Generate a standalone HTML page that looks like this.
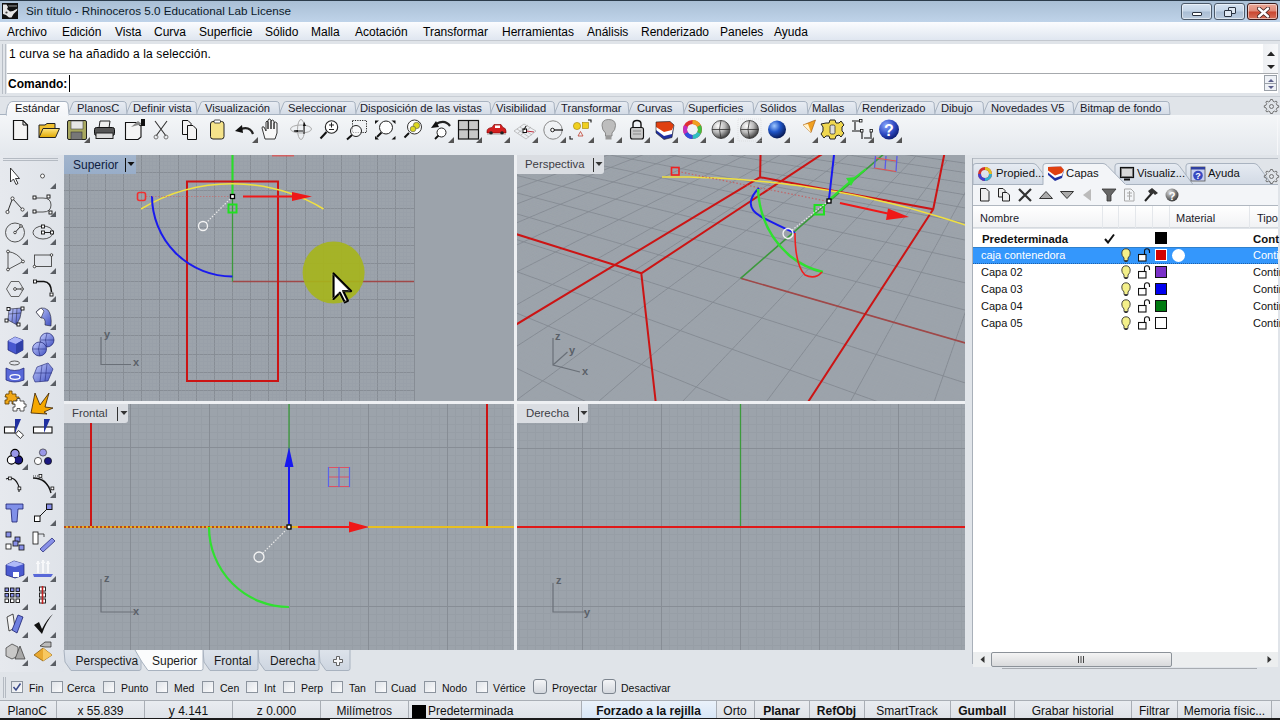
<!DOCTYPE html>
<html><head><meta charset="utf-8">
<style>
*{margin:0;padding:0;box-sizing:border-box}
html,body{width:1280px;height:720px;overflow:hidden;background:#e0e4e9;font-family:"Liberation Sans",sans-serif;font-size:12px;color:#000;position:relative}
.a{position:absolute}
.t{position:absolute;white-space:pre;line-height:1}
#title{left:0;top:0;width:1280px;height:22px;background:linear-gradient(#a9bfd5,#bfd3e9);border-top:1px solid #2b3b4a}
#menu{left:0;top:22px;width:1280px;height:19px;background:linear-gradient(#fbfcfe,#dfe6f0);border-bottom:1px solid #c3c8cf}
#cmd{left:7px;top:44px;width:1271px;height:49px;background:#fff}
.wbtn{width:31px;height:17px;border:1px solid #4c5a6a;border-radius:3px;background:linear-gradient(#d4e2f1 0%,#c3d4e7 48%,#a9bdd4 52%,#bccde0 100%);box-shadow:inset 0 0 0 1px rgba(255,255,255,0.5)}
.wbtn.close{border-color:#3a1a1a;background:linear-gradient(#eaa898 0%,#df8a78 48%,#c9452f 52%,#d6705a 100%)}
.vp{position:absolute;background:#9ca3ab;overflow:hidden}
.vlabel{position:absolute;left:0;top:0;height:19px;background:#e4e8ee;color:#333;font-size:12px}
</style></head><body>

<!-- title bar -->
<div id="title" class="a">
  <svg class="a" style="left:2px;top:1px" width="17" height="17" viewBox="0 0 17 17">
    <rect x="0" y="1" width="16" height="16" fill="#111"/>
    <path d="M6,3.5 H15 V4.5 H7 Z" fill="#9a9a9a"/>
    <path d="M1,2.5 L4.5,2.5 L6,5 L5,7 L8,9.5 L11,9 L15.5,6.5 L15,8.5 L11.5,12 L9.5,15.5 L7,15.5 L4,13 L1,12 Z" fill="#e6e6e6"/>
    <circle cx="4.5" cy="10.5" r="1.1" fill="#444"/>
  </svg>
  <div class="t" style="left:26px;top:4px;font-size:11.7px;color:#0c1a2a">Sin título - Rhinoceros 5.0 Educational Lab License</div>
  <div class="a wbtn" style="left:1181px;top:2px"><div class="a" style="left:10px;top:8px;width:10px;height:4px;background:#fff;border:1px solid #2a3340;border-radius:1px"></div></div>
  <div class="a wbtn" style="left:1214px;top:2px">
    <div class="a" style="left:13px;top:3px;width:8px;height:7px;background:#dfe8f2;border:1px solid #2a3340;border-radius:1px"></div>
    <div class="a" style="left:9px;top:6px;width:8px;height:7px;background:#dfe8f2;border:1px solid #2a3340;border-radius:1px"></div>
  </div>
  <div class="a wbtn close" style="left:1247px;top:2px">
    <svg class="a" style="left:9px;top:3px" width="13" height="11" viewBox="0 0 13 11"><path d="M2 1.5 L11 9.5 M11 1.5 L2 9.5" stroke="#3a2020" stroke-width="4" stroke-linecap="round"/><path d="M2 1.5 L11 9.5 M11 1.5 L2 9.5" stroke="#fff" stroke-width="2.4" stroke-linecap="round"/></svg>
  </div>
</div>

<!-- menu -->
<div id="menu" class="a">
  <div class="t" style="left:7px;top:4px">Archivo</div>
  <div class="t" style="left:62px;top:4px">Edición</div>
  <div class="t" style="left:115px;top:4px">Vista</div>
  <div class="t" style="left:154px;top:4px">Curva</div>
  <div class="t" style="left:199px;top:4px">Superficie</div>
  <div class="t" style="left:265px;top:4px">Sólido</div>
  <div class="t" style="left:311px;top:4px">Malla</div>
  <div class="t" style="left:355px;top:4px">Acotación</div>
  <div class="t" style="left:423px;top:4px">Transformar</div>
  <div class="t" style="left:502px;top:4px">Herramientas</div>
  <div class="t" style="left:587px;top:4px">Análisis</div>
  <div class="t" style="left:641px;top:4px">Renderizado</div>
  <div class="t" style="left:720px;top:4px">Paneles</div>
  <div class="t" style="left:774px;top:4px">Ayuda</div>
</div>

<!-- command area -->
<div class="a" style="left:2px;top:44px;width:1px;height:50px;background:#b8bec6"></div>
<div class="a" style="left:5px;top:44px;width:1px;height:50px;background:#b8bec6"></div>
<div id="cmd" class="a">
  <div class="t" style="left:2px;top:4px;letter-spacing:0.12px">1 curva se ha añadido a la selección.</div>
  <div class="a" style="left:0;top:29px;width:1271px;height:1px;background:#a6a9ad"></div>
  <div class="t" style="left:1px;top:34px;font-weight:bold">Comando:</div>
  <div class="a" style="left:62px;top:31px;width:1px;height:17px;background:#000"></div>
  <div class="a" style="left:1256px;top:0;width:15px;height:29px;background:linear-gradient(90deg,#eef0f3,#f6f7f9)"></div>
  <svg class="a" style="left:1258px;top:4px" width="12" height="22" viewBox="0 0 12 22"><path d="M2 8 L6 3.5 L10 8 Z" fill="#222"/><path d="M2 17 L6 21 L10 17 Z" fill="#222"/></svg>
  <div class="a" style="left:1257px;top:31px;width:13px;height:16px;background:#eef1f6;border:1px solid #9aa0a8"></div>
  <svg class="a" style="left:1258px;top:32px" width="12" height="16" viewBox="0 0 12 16"><path d="M3 6 L6 3 L9 6 Z" fill="#5a5f8a"/><path d="M3 10 L6 13 L9 10 Z" fill="#5a5f8a"/><path d="M0 7.5 H12" stroke="#9aa0a8"/></svg>
</div>
<div class="a" style="left:0;top:96px;width:1280px;height:1px;background:#cdd2d8"></div>

<div class="a" style="left:0;top:115px;width:1280px;height:40px;background:linear-gradient(#f4f6f8,#e4e8ed)"></div>
<svg class="a" style="left:0;top:96px" width="1280" height="24" viewBox="0 96 1280 24">
<defs><linearGradient id="tg" x1="0" y1="0" x2="0" y2="1"><stop offset="0" stop-color="#e9edf3"/><stop offset="1" stop-color="#d3dbe6"/></linearGradient>
<linearGradient id="tga" x1="0" y1="0" x2="0" y2="1"><stop offset="0" stop-color="#fdfdfe"/><stop offset="1" stop-color="#f3f5f8"/></linearGradient></defs>
<path d="M1073,114.5 L1078,102.5 Q1079,101.5 1081,101.5 L1166,101.5 Q1168,101.5 1169,103 L1170,114.5" fill="url(#tg)" stroke="#a7b2c0" stroke-width="1"/>
<path d="M983,114.5 L988,102.5 Q989,101.5 991,101.5 L1070,101.5 Q1072,101.5 1073,103 L1074,114.5" fill="url(#tg)" stroke="#a7b2c0" stroke-width="1"/>
<path d="M934,114.5 L939,102.5 Q940,101.5 942,101.5 L980,101.5 Q982,101.5 983,103 L984,114.5" fill="url(#tg)" stroke="#a7b2c0" stroke-width="1"/>
<path d="M856,114.5 L861,102.5 Q862,101.5 864,101.5 L931,101.5 Q933,101.5 934,103 L935,114.5" fill="url(#tg)" stroke="#a7b2c0" stroke-width="1"/>
<path d="M807,114.5 L812,102.5 Q813,101.5 815,101.5 L853,101.5 Q855,101.5 856,103 L857,114.5" fill="url(#tg)" stroke="#a7b2c0" stroke-width="1"/>
<path d="M753,114.5 L758,102.5 Q759,101.5 761,101.5 L804,101.5 Q806,101.5 807,103 L808,114.5" fill="url(#tg)" stroke="#a7b2c0" stroke-width="1"/>
<path d="M683,114.5 L688,102.5 Q689,101.5 691,101.5 L750,101.5 Q752,101.5 753,103 L754,114.5" fill="url(#tg)" stroke="#a7b2c0" stroke-width="1"/>
<path d="M628,114.5 L633,102.5 Q634,101.5 636,101.5 L680,101.5 Q682,101.5 683,103 L684,114.5" fill="url(#tg)" stroke="#a7b2c0" stroke-width="1"/>
<path d="M554,114.5 L559,102.5 Q560,101.5 562,101.5 L625,101.5 Q627,101.5 628,103 L629,114.5" fill="url(#tg)" stroke="#a7b2c0" stroke-width="1"/>
<path d="M490,114.5 L495,102.5 Q496,101.5 498,101.5 L551,101.5 Q553,101.5 554,103 L555,114.5" fill="url(#tg)" stroke="#a7b2c0" stroke-width="1"/>
<path d="M355,114.5 L360,102.5 Q361,101.5 363,101.5 L487,101.5 Q489,101.5 490,103 L491,114.5" fill="url(#tg)" stroke="#a7b2c0" stroke-width="1"/>
<path d="M279,114.5 L284,102.5 Q285,101.5 287,101.5 L352,101.5 Q354,101.5 355,103 L356,114.5" fill="url(#tg)" stroke="#a7b2c0" stroke-width="1"/>
<path d="M196,114.5 L201,102.5 Q202,101.5 204,101.5 L276,101.5 Q278,101.5 279,103 L280,114.5" fill="url(#tg)" stroke="#a7b2c0" stroke-width="1"/>
<path d="M126,114.5 L131,102.5 Q132,101.5 134,101.5 L193,101.5 Q195,101.5 196,103 L197,114.5" fill="url(#tg)" stroke="#a7b2c0" stroke-width="1"/>
<path d="M68,114.5 L73,102.5 Q74,101.5 76,101.5 L123,101.5 Q125,101.5 126,103 L127,114.5" fill="url(#tg)" stroke="#a7b2c0" stroke-width="1"/>
<path d="M0,114.5 H1170" stroke="#a7b2c0" stroke-width="1"/>
<path d="M6,115 Q7,104 10,102.5 Q11,101.5 13,101.5 L65,101.5 Q67.5,101.5 68,104 L69,115 Z" fill="url(#tga)" stroke="#a7b2c0" stroke-width="1"/>
<rect x="7" y="114" width="61.5" height="2" fill="#f4f6f9"/>
</svg>
<div class="t" style="left:15px;top:103px;font-size:11.2px;color:#111">Estándar</div>
<div class="t" style="left:77px;top:103px;font-size:11.2px;color:#1a1a2a">PlanosC</div>
<div class="t" style="left:133px;top:103px;font-size:11.2px;color:#1a1a2a">Definir vista</div>
<div class="t" style="left:205px;top:103px;font-size:11.2px;color:#1a1a2a">Visualización</div>
<div class="t" style="left:288px;top:103px;font-size:11.2px;color:#1a1a2a">Seleccionar</div>
<div class="t" style="left:360px;top:103px;font-size:11.2px;color:#1a1a2a">Disposición de las vistas</div>
<div class="t" style="left:496px;top:103px;font-size:11.2px;color:#1a1a2a">Visibilidad</div>
<div class="t" style="left:561px;top:103px;font-size:11.2px;color:#1a1a2a">Transformar</div>
<div class="t" style="left:637px;top:103px;font-size:11.2px;color:#1a1a2a">Curvas</div>
<div class="t" style="left:688px;top:103px;font-size:11.2px;color:#1a1a2a">Superficies</div>
<div class="t" style="left:760px;top:103px;font-size:11.2px;color:#1a1a2a">Sólidos</div>
<div class="t" style="left:812px;top:103px;font-size:11.2px;color:#1a1a2a">Mallas</div>
<div class="t" style="left:862px;top:103px;font-size:11.2px;color:#1a1a2a">Renderizado</div>
<div class="t" style="left:941px;top:103px;font-size:11.2px;color:#1a1a2a">Dibujo</div>
<div class="t" style="left:991px;top:103px;font-size:11.2px;color:#1a1a2a">Novedades V5</div>
<div class="t" style="left:1080px;top:103px;font-size:11.2px;color:#1a1a2a">Bitmap de fondo</div>
<svg class="a" style="left:0;top:115px" width="910" height="32" viewBox="0 115 910 32">
<defs>
<radialGradient id="sph" cx="0.35" cy="0.3" r="0.75"><stop offset="0" stop-color="#fff"/><stop offset="0.5" stop-color="#b9b9b9"/><stop offset="1" stop-color="#333"/></radialGradient>
<radialGradient id="bsph" cx="0.35" cy="0.3" r="0.75"><stop offset="0" stop-color="#9fc8ff"/><stop offset="0.45" stop-color="#1f55c8"/><stop offset="1" stop-color="#06154a"/></radialGradient>
<radialGradient id="hsph" cx="0.35" cy="0.3" r="0.75"><stop offset="0" stop-color="#8aa8ff"/><stop offset="0.6" stop-color="#2d48c0"/><stop offset="1" stop-color="#0b1a70"/></radialGradient>
<linearGradient id="fold" x1="0" y1="0" x2="0" y2="1"><stop offset="0" stop-color="#ffe680"/><stop offset="1" stop-color="#e0a800"/></linearGradient>
</defs>
<g fill="#555">
<path d="M90,137 V143 H84 Z"/><path d="M258,137 V143 H252 Z"/><path d="M454,137 V143 H448 Z"/><path d="M482,137 V143 H476 Z"/>
<path d="M510,137 V143 H504 Z"/><path d="M538,137 V143 H532 Z"/><path d="M566,137 V143 H560 Z"/><path d="M594,137 V143 H588 Z"/>
<path d="M622,137 V143 H616 Z"/><path d="M650,137 V143 H644 Z"/><path d="M678,137 V143 H672 Z"/><path d="M706,137 V143 H700 Z"/>
<path d="M734,137 V143 H728 Z"/><path d="M762,137 V143 H756 Z"/><path d="M790,137 V143 H784 Z"/><path d="M818,137 V143 H812 Z"/>
<path d="M846,137 V143 H840 Z"/><path d="M874,137 V143 H868 Z"/><path d="M902,137 V143 H896 Z"/>
</g>
<!-- 1 new -->
<path d="M13.5,120.5 H23 L27.5,125 V139.5 H13.5 Z" fill="#f4f4f4" stroke="#111" stroke-width="1.2"/>
<path d="M23,120.5 V125 H27.5" fill="none" stroke="#111"/>
<!-- 2 open -->
<path d="M39,137.5 V125 H45 L47,123.5 H55 V128" fill="#f0c030" stroke="#222"/>
<path d="M39,137.5 L43,128.5 H59.5 L55.5,137.5 Z" fill="url(#fold)" stroke="#222"/>
<!-- 3 save -->
<rect x="67.5" y="120.5" width="19" height="19" rx="1.5" fill="#a8a860" stroke="#222"/>
<rect x="71" y="121" width="12" height="8" fill="#e6e6e6" stroke="#444" stroke-width="0.6"/>
<rect x="71" y="132" width="11" height="7.5" fill="#777" stroke="#333" stroke-width="0.6"/>
<!-- 4 print -->
<path d="M99,128 L100,121 H110 L109,128" fill="#eee" stroke="#222"/>
<rect x="94.5" y="127.5" width="20" height="8" rx="2" fill="#555" stroke="#111"/>
<rect x="96" y="133" width="17" height="5.5" fill="#ddd" stroke="#222"/>
<!-- 5 import -->
<path d="M125.5,122.5 H136 L141,126 V137 L138,139.5 H125.5 Z" fill="#f4f4f4" stroke="#111" stroke-width="1.1"/>
<path d="M131,127 L138,121 L142,124 Z" fill="#888"/><rect x="141" y="119" width="4" height="7" fill="#111"/>
<!-- 6 scissors -->
<path d="M155,121 L166,136 M167,121 L156,136" stroke="#333" stroke-width="1.1" fill="none"/>
<circle cx="156" cy="137" r="2" fill="none" stroke="#777"/><circle cx="166" cy="137" r="2" fill="none" stroke="#777"/>
<!-- 7 copy -->
<path d="M182.5,120.5 H188 L191,123.5 V134.5 H182.5 Z" fill="#f4f4f4" stroke="#111"/>
<path d="M187.5,125.5 H193 L196.5,129 V139.5 H187.5 Z" fill="#f4f4f4" stroke="#111"/>
<!-- 8 paste -->
<rect x="210.5" y="121.5" width="13.5" height="17.5" rx="2.5" fill="#f5e38a" stroke="#222"/>
<rect x="214" y="120" width="6.5" height="3" rx="1" fill="#fff" stroke="#222" stroke-width="0.8"/>
<!-- 9 undo -->
<path d="M253,134 Q250,126 241,129" fill="none" stroke="#222" stroke-width="2.2"/>
<path d="M235,131 L242,125 L243,133 Z" fill="#111"/>
<!-- 10 hand -->
<path d="M265,139 L262,128 Q262,126 264,127 L266,131 V122 Q267,120 268,122 V129 V120 Q269,118 271,120 V129 V121 Q272,119 274,121 V129 V123 Q275,121 277,123 V133 L275,139 Z" fill="#f8f8f8" stroke="#222" stroke-width="0.9"/>
<!-- 11 rotate -->
<ellipse cx="301" cy="129" rx="10.5" ry="4" fill="none" stroke="#aaa"/>
<ellipse cx="301" cy="129.5" rx="3.5" ry="10" fill="none" stroke="#aaa"/>
<path d="M303,126 L304,121.5 L306,126 Z M298,132 L293,131 L298,130 Z" fill="#111"/>
<path d="M304,125 V134 M294,131 H303" stroke="#111"/>
<!-- 12 zoom +- -->
<circle cx="331.5" cy="127" r="6.2" fill="#fff" stroke="#222" stroke-width="1.1"/>
<path d="M326.5,132 L320.5,138.5" stroke="#111" stroke-width="2"/>
<path d="M329,125 H334 M331.5,122.5 V127.5 M329,129.5 H334" stroke="#222"/>
<!-- 13 zoom window -->
<rect x="352.5" y="120.5" width="14" height="12" fill="none" stroke="#222" stroke-dasharray="1.2 1.2"/>
<circle cx="356" cy="131" r="5.5" fill="#fff" fill-opacity="0.6" stroke="#222"/>
<path d="M352,135 L347,139.5" stroke="#111" stroke-width="2"/>
<!-- 14 zoom extents -->
<circle cx="386" cy="127.5" r="6.5" fill="#fff" stroke="#222"/>
<path d="M381.5,132.5 L377,137" stroke="#111" stroke-width="2"/>
<path d="M375,124 V120.5 H379 Z M395.5,124 V120.5 H391.5 Z M375,136 V139.5 H379 Z M395.5,136 V139.5 H391.5 Z" fill="#111"/>
<!-- 15 zoom selected -->
<circle cx="414.5" cy="127" r="7" fill="#fff" stroke="#333"/>
<circle cx="416.5" cy="125.5" r="3.2" fill="#ddd820" stroke="#555" stroke-width="0.6"/>
<circle cx="413" cy="129" r="2.8" fill="#ddd820" stroke="#555" stroke-width="0.6"/>
<path d="M409,133 L404.5,137.5" stroke="#111" stroke-width="2"/>
<!-- 16 rotate cam -->
<path d="M450,126 Q445,119 436,124" fill="none" stroke="#222" stroke-width="2.2"/>
<path d="M431,128 L436,121 L439,127 Z" fill="#111"/>
<circle cx="441.5" cy="132.5" r="4.5" fill="#fff" stroke="#222"/>
<path d="M438.5,135.5 L435,139" stroke="#111" stroke-width="1.8"/>
<!-- 17 4view -->
<rect x="458.5" y="120.5" width="20" height="18.5" fill="#c8c8c8" stroke="#111" stroke-width="1.2"/>
<path d="M468.5,120.5 V139 M458.5,129.75 H478.5" stroke="#111" stroke-width="1.2"/>
<!-- 18 car -->
<path d="M487,131 Q487,128 492,127.5 L494,124.5 H501 L503,127.5 Q506,128 506,131 V133 H487 Z" fill="#d42020" stroke="#700" stroke-width="0.6"/>
<rect x="495" y="125.5" width="5" height="2.5" fill="#fff"/>
<circle cx="491" cy="133" r="1.8" fill="#222"/><circle cx="502" cy="133" r="1.8" fill="#222"/>
<path d="M487,134.5 H506" stroke="#aaa" stroke-width="0.6"/>
<!-- 19 plane grid -->
<path d="M514,131 L524,124 L536,131 L526,139 Z M517,129 L529,137 M520,127 L532,135 M521,135 L531,127 M518,133 L528,125" fill="none" stroke="#aaa" stroke-width="0.7"/>
<rect x="523" y="129" width="3.5" height="3.5" fill="#fff" stroke="#111"/>
<path d="M526.5,131 L534,132" stroke="#c03040"/><path d="M526,126 L524,130" stroke="#111"/>
<!-- 20 circle -->
<circle cx="553" cy="130" r="9.2" fill="none" stroke="#888" stroke-width="1"/>
<circle cx="552.5" cy="130" r="1.8" fill="#fff" stroke="#222"/>
<path d="M554,130 H563" stroke="#111" stroke-width="1.2"/>
<!-- 21 shapes -->
<circle cx="577" cy="126" r="3.6" fill="#f0d020" stroke="#a08000" stroke-width="0.6"/>
<rect x="582.5" y="122.5" width="6" height="6" fill="#f0d020" stroke="#a08000" stroke-width="0.6"/>
<path d="M578,136 L580.5,131.5 L583,136 Z" fill="none" stroke="#c04030" stroke-width="0.8"/>
<path d="M588,120 H591 V122.5 M570,136 V139 H573" fill="none" stroke="#111" stroke-width="1.1"/>
<!-- 22 bulb -->
<path d="M605.5,136 V133 Q602,130 602,125.5 Q602,119.5 608.6,119.5 Q615.5,119.5 615.5,125.5 Q615.5,130 612,133 V136 Z" fill="#bdbdbd" stroke="#777" stroke-width="0.8"/>
<rect x="605.5" y="136" width="6" height="3.5" fill="#999"/>
<!-- 23 lock -->
<path d="M633,128 V124 Q633,120.5 637,120.5 Q641,120.5 641,124 V128" fill="none" stroke="#111" stroke-width="1.4"/>
<rect x="630.5" y="127.5" width="13" height="11.5" rx="2" fill="#c8c8c8" stroke="#111" stroke-width="1.1"/>
<path d="M633,131 H641 M633,134 H641" stroke="#888"/>
<!-- 24 layers -->
<path d="M656,122 L670,121.5 L674,125 L672,137.5 L664,139.5 L656,133 Z" fill="#2030a0"/>
<path d="M656,122 L670,121.5 L674,125 L672,134 L664,136 L656,130 Z" fill="#fff"/>
<path d="M656,122 L670,121.5 L674,125 L672,130 L664,132 L656,127 Z" fill="#e04010"/>
<path d="M656,122 L670,121.5 L674,125 L672,137.5 L664,139.5 L656,133 Z" fill="none" stroke="#222" stroke-width="0.6"/>
<!-- 25 color wheel -->
<circle cx="692.5" cy="129.5" r="7.5" fill="none" stroke="#e03030" stroke-width="4"/>
<path d="M692.5,122 A7.5,7.5 0 0 1 699,126" fill="none" stroke="#f0a020" stroke-width="4"/>
<path d="M699,126 A7.5,7.5 0 0 1 699,133" fill="none" stroke="#40c040" stroke-width="4"/>
<path d="M699,133 A7.5,7.5 0 0 1 692.5,137" fill="none" stroke="#30c0c0" stroke-width="4"/>
<path d="M692.5,137 A7.5,7.5 0 0 1 686,133" fill="none" stroke="#3050e0" stroke-width="4"/>
<path d="M686,133 A7.5,7.5 0 0 1 686,126" fill="none" stroke="#c030c0" stroke-width="4"/>
<!-- 26 sphere -->
<circle cx="721" cy="129.5" r="9" fill="url(#sph)" stroke="#333" stroke-width="0.8"/>
<path d="M712,129.5 H730 M721,120.5 Q718,129.5 721,138.5" stroke="#333" fill="none" stroke-width="0.8"/>
<!-- 27 grid sphere -->
<rect x="738" y="119" width="23" height="22" fill="none" stroke="#ccc" stroke-width="0.5" stroke-dasharray="1 1"/>
<circle cx="749.5" cy="129.5" r="9" fill="url(#sph)" stroke="#333" stroke-width="0.8"/>
<path d="M740.5,129.5 H758.5 M749.5,120.5 Q746.5,129.5 749.5,138.5" stroke="#333" fill="none" stroke-width="0.8"/>
<!-- 28 blue sphere -->
<circle cx="777" cy="129.5" r="9" fill="url(#bsph)"/>
<!-- 29 orange tri -->
<path d="M803,125 L815.5,120 L811,132.5 Z" fill="#f0a020" stroke="#a05000" stroke-width="0.6"/>
<path d="M803,125 L808,124 L811,132.5 Z" fill="#fff3d0"/>
<!-- 30 gear -->
<path d="M826,123 L829,123 L830,120 H835 L836,123 L839,123 L841,121 L844,125 L842,127 V131 L844,133 L841,137 L839,135 L836,136 L835,139 H830 L829,136 L826,136 L824,138 L821,134 L823,131 V127 L821,124 Z" fill="#f0d850" stroke="#222" stroke-width="1"/>
<rect x="830" y="125" width="5" height="9" rx="1.5" fill="#ddd" stroke="#333" stroke-width="0.8"/>
<!-- 31 dimension -->
<path d="M852,121 H860 M852,131 H860 L862,131 V139 M871,131 V139 M855,122 V130 M864,138 H870" stroke="#111" stroke-width="1.1" fill="none"/>
<rect x="859.5" y="119.5" width="2.5" height="2.5" fill="#fff" stroke="#111" stroke-width="0.8"/>
<rect x="860.5" y="129.5" width="2.5" height="2.5" fill="#fff" stroke="#111" stroke-width="0.8"/>
<rect x="870" y="129.5" width="2.5" height="2.5" fill="#fff" stroke="#111" stroke-width="0.8"/>
<!-- 32 help -->
<circle cx="889" cy="129.5" r="10" fill="url(#hsph)"/>
<text x="889" y="135.5" font-family="Liberation Sans" font-weight="bold" font-size="16" fill="#fff" text-anchor="middle">?</text>
</svg>

<!-- toolbar bg & left toolbar -->
<div class="a" style="left:0;top:96px;width:1280px;height:1px;background:#c9ced5"></div>
<div class="a" style="left:1277px;top:115px;width:1px;height:43px;background:#f6f7f9"></div>
<svg class="a" style="left:1262px;top:98px" width="18" height="16" viewBox="0 0 18 16">
<path d="M9,1.5 L10.5,1.5 L11,3.2 L12.6,3.9 L14.1,3 L15.2,4.1 L14.3,5.6 L15,7.2 L16.7,7.7 V9.3 L15,9.8 L14.3,11.4 L15.2,12.9 L14.1,14 L12.6,13.1 L11,13.8 L10.5,15.5 H8.5 L8,13.8 L6.4,13.1 L4.9,14 L3.8,12.9 L4.7,11.4 L4,9.8 L2.3,9.3 V7.7 L4,7.2 L4.7,5.6 L3.8,4.1 L4.9,3 L6.4,3.9 L8,3.2 L8.5,1.5 Z" fill="none" stroke="#666" stroke-width="0.9"/>
<circle cx="9.5" cy="8.5" r="2" fill="none" stroke="#666" stroke-width="0.9"/>
</svg>
<div class="a" style="left:0;top:155px;width:64px;height:517px;background:linear-gradient(90deg,#e6e9ee,#dfe3e9)"></div>
<div class="a" style="left:3px;top:158px;width:55px;height:1px;background:#b4bac2"></div>
<div class="a" style="left:3px;top:160px;width:55px;height:1px;background:#b4bac2"></div>
<svg class="a" style="left:0;top:160px" width="64" height="512" viewBox="0 160 64 512">
<defs>
<linearGradient id="bl" x1="0" y1="0" x2="1" y2="1"><stop offset="0" stop-color="#c8d0ff"/><stop offset="1" stop-color="#4050c0"/></linearGradient>
</defs>
<g fill="#5a5e64">
<path d="M56,183 V189 H50 Z"/>
<path d="M28,211 V217 H22 Z"/><path d="M56,211 V217 H50 Z"/>
<path d="M28,239 V245 H22 Z"/><path d="M56,239 V245 H50 Z"/>
<path d="M28,268 V274 H22 Z"/><path d="M56,268 V274 H50 Z"/>
<path d="M28,296 V302 H22 Z"/><path d="M56,296 V302 H50 Z"/>
<path d="M28,324 V330 H22 Z"/><path d="M56,324 V330 H50 Z"/>
<path d="M28,352 V358 H22 Z"/><path d="M56,352 V358 H50 Z"/>
<path d="M28,380 V386 H22 Z"/><path d="M56,380 V386 H50 Z"/>
<path d="M28,464 V470 H22 Z"/>
<path d="M56,492 V498 H50 Z"/>
<path d="M56,520 V526 H50 Z"/>
<path d="M28,576 V582 H22 Z"/><path d="M56,576 V582 H50 Z"/>
<path d="M28,604 V610 H22 Z"/><path d="M56,604 V610 H50 Z"/>
<path d="M28,632 V638 H22 Z"/><path d="M56,632 V638 H50 Z"/>
<path d="M28,660 V666 H22 Z"/><path d="M56,660 V666 H50 Z"/>
</g>
<!-- row1 -->
<path d="M10.5,168 V182 L13.5,179 L16,184.5 L18,183.5 L15.5,178.5 H19.5 Z" fill="#fff" stroke="#222" stroke-width="0.9"/>
<circle cx="42.5" cy="176" r="2" fill="#fff" stroke="#333" stroke-width="0.8"/>
<!-- row2 -->
<path d="M7.5,212 L12.5,198.5 L22.5,209.5" fill="none" stroke="#333"/>
<circle cx="7.5" cy="212" r="1.6" fill="#fff" stroke="#222" stroke-width="0.8"/><circle cx="12.5" cy="198.5" r="1.6" fill="#fff" stroke="#222" stroke-width="0.8"/><circle cx="22.5" cy="209.5" r="1.6" fill="#fff" stroke="#222" stroke-width="0.8"/>
<path d="M35,198 H43 Q51,198 51,205 Q51,212 43,212 H35" fill="none" stroke="#444" stroke-width="0.9"/>
<g fill="#fff" stroke="#111" stroke-width="0.9"><rect x="33" y="196" width="3" height="3"/><rect x="47" y="195" width="3" height="3"/><rect x="33" y="210" width="3" height="3"/><rect x="49" y="211" width="3" height="3"/></g>
<!-- row3 -->
<circle cx="15" cy="232.5" r="9.5" fill="none" stroke="#444" stroke-width="0.9"/>
<path d="M15,232.5 L21,226" stroke="#222"/><circle cx="15" cy="232.5" r="1.3" fill="#fff" stroke="#222" stroke-width="0.8"/><circle cx="21" cy="226" r="1.3" fill="#fff" stroke="#222" stroke-width="0.8"/>
<ellipse cx="43" cy="232.5" rx="10" ry="6.5" fill="none" stroke="#444" stroke-width="0.9"/>
<g fill="#fff" stroke="#111" stroke-width="0.9"><rect x="41.5" y="225" width="3" height="3"/><rect x="41.5" y="231" width="3" height="3"/><rect x="50.5" y="231" width="3" height="3"/></g>
<path d="M44.5,232.5 H50.5" stroke="#222"/>
<!-- row4 -->
<path d="M8,251.5 V269.5 L23,261.5 Q18,253 8,251.5" fill="none" stroke="#444" stroke-width="0.9"/>
<g fill="#fff" stroke="#222" stroke-width="0.8"><circle cx="8" cy="251.5" r="1.4"/><circle cx="8" cy="269.5" r="1.4"/><circle cx="23" cy="261.5" r="1.4"/></g>
<rect x="34.5" y="255" width="17" height="11.5" fill="none" stroke="#444" stroke-width="0.9"/>
<g fill="#fff" stroke="#222" stroke-width="0.8"><circle cx="51.5" cy="255" r="1.3"/><circle cx="34.5" cy="266.5" r="1.3"/></g>
<!-- row5 -->
<path d="M11,281.5 H19 L23.5,289 L19,296.5 H11 L6.5,289 Z" fill="none" stroke="#555" stroke-width="0.9"/>
<path d="M15,289 H22" stroke="#333"/><circle cx="15" cy="289" r="1.4" fill="#fff" stroke="#222" stroke-width="0.8"/><circle cx="22" cy="289" r="1.2" fill="#fff" stroke="#222" stroke-width="0.7"/>
<path d="M35,281.5 H44 Q51,282 51.5,292" fill="none" stroke="#111" stroke-width="1.6"/>
<rect x="33.5" y="280" width="3" height="3" fill="#fff" stroke="#111" stroke-width="0.9"/><rect x="50" y="293" width="3" height="3" fill="#fff" stroke="#111" stroke-width="0.9"/>
<!-- row6 -->
<path d="M9,309 L22,308 L20,318 Q18,321 17,325 L8,320 Z" fill="url(#bl)" stroke="#223" stroke-width="0.6"/>
<path d="M9,314 L21,313 M13,309 L12,322 M17,308 L16,324" stroke="#223" stroke-width="0.5"/>
<g fill="#fff" stroke="#111" stroke-width="0.9"><rect x="7" y="307.5" width="3" height="3"/><rect x="21" y="307" width="3" height="3"/><rect x="5" y="319" width="3" height="3"/><rect x="17" y="323" width="3" height="3"/></g>
<path d="M36,312 Q41,305 48,310 Q52,315 51,326 L45,325 Q46,317 41,318 Z" fill="url(#bl)" stroke="#223" stroke-width="0.6"/>
<path d="M36,312 L41,308 L44,311 L41,318 Z" fill="#fff" stroke="#223" stroke-width="0.6"/>
<!-- row7 -->
<path d="M8,341 L15,337 L23,340 V350 L16,354 L8,350 Z" fill="#4858d0" stroke="#1a2070" stroke-width="0.7"/>
<path d="M8,341 L15,337 L23,340 L16,344 Z" fill="#aab4f8"/><path d="M16,344 V354 L23,350 V340 Z" fill="#3040a8"/>
<circle cx="47" cy="340" r="7" fill="url(#bl)" stroke="#1a2070" stroke-width="0.7"/>
<circle cx="39.5" cy="349" r="7" fill="url(#bl)" stroke="#1a2070" stroke-width="0.7"/>
<path d="M33,349 H46 M40,342 Q37,349 40,356 M41,340 H54 M47,333 Q44,340 47,347" stroke="#1a2070" stroke-width="0.5" fill="none"/>
<!-- row8 -->
<ellipse cx="14.5" cy="363" rx="5" ry="2" fill="none" stroke="#333" stroke-width="0.8"/>
<path d="M6,368 Q14.5,373 24,368 V380 Q14.5,384 6,380 Z" fill="#5868d8" stroke="#1a2070" stroke-width="0.7"/>
<ellipse cx="15" cy="377" rx="5" ry="2.3" fill="none" stroke="#fff" stroke-width="1.3"/>
<path d="M37,367 L48,363 L53,369 L48,381 L35,382 L33,377 Z" fill="url(#bl)" stroke="#1a2070" stroke-width="0.6"/>
<path d="M35,373 L52,373 M42,365 L40,382 M47,364 L45,381" stroke="#1a2070" stroke-width="0.5"/>
<!-- row9 puzzle / explode -->
<path d="M6,394 L9,394 L9,391 L12,391 L12,394 L16,394 L16,397 L19,397 L19,400 L16,400 L16,404 L12,404 L12,401 L9,401 L9,404 L5,404 L5,400 L7,400 L7,397 L5,397 Z" fill="#f0a818" stroke="#5a3a00" stroke-width="0.8"/>
<path d="M13,401 L17,401 L17,398.5 L20,398.5 L20,401 L24,401 L24,404 L26,404 L26,407 L24,407 L24,411 L20,411 L20,408.5 L17,408.5 L17,411 L13,411 L13,407 L15,407 L15,404 L13,404 Z" fill="#fff" stroke="#333" stroke-width="0.8"/>
<path d="M31,413 L35,393 L40,405 L49,393 L45,407 L53,408 L44,412 L47,414 Z" fill="#f5a800" stroke="#3a2000" stroke-width="0.8"/>
<!-- row10 trim -->
<rect x="4.5" y="427" width="10.5" height="6" fill="#fff" stroke="#111" stroke-width="1.1"/>
<path d="M15,419 H21 L15,433 Z" fill="#2030a0"/>
<path d="M15.5,434 L18.5,430.5 L23.5,435 L20.5,438.5 Z" fill="#fff" stroke="#222" stroke-width="0.9"/>
<rect x="33.5" y="427" width="18.5" height="6" fill="#fff" stroke="#111" stroke-width="1.1"/>
<path d="M44,419 H50 L44,433 Z" fill="#2030a0"/>
<!-- row11 booleans -->
<g stroke="#000" stroke-width="2.2"><circle cx="15" cy="453.5" r="3.6"/><circle cx="11.5" cy="460" r="3.6"/><circle cx="18.5" cy="460" r="3.6"/></g>
<circle cx="15" cy="453.5" r="3.6" fill="#9a98e8"/><circle cx="11.5" cy="460" r="3.6" fill="#fff"/><circle cx="18.5" cy="460" r="3.6" fill="#1a1880"/>
<circle cx="43" cy="452.5" r="3.6" fill="#9a98e8" stroke="#333" stroke-width="0.7"/><circle cx="38" cy="461" r="3.6" fill="#fff" stroke="#333" stroke-width="0.8"/><circle cx="48" cy="461" r="3.6" fill="#1a1880" stroke="#111" stroke-width="0.7"/>
<!-- row12 curves -->
<path d="M6,479 Q15,475 19,487 V492" fill="none" stroke="#111" stroke-width="1.1"/>
<rect x="8.5" y="477" width="2.8" height="2.8" fill="#fff" stroke="#111" stroke-width="0.8"/><rect x="18" y="487" width="2.8" height="2.8" fill="#fff" stroke="#111" stroke-width="0.8"/>
<path d="M33,478 Q47,478 51,493" fill="none" stroke="#111" stroke-width="1.3"/>
<path d="M33,476 H40 L52,490" fill="none" stroke="#111" stroke-width="0.8" stroke-dasharray="1 1"/>
<rect x="39" y="474.5" width="2.8" height="2.8" fill="#fff" stroke="#111" stroke-width="0.8"/><rect x="51" y="487" width="2.8" height="2.8" fill="#fff" stroke="#111" stroke-width="0.8"/>
<!-- row13 text, scale -->
<path d="M6,504 H23 V509 H18 L17,522 H12 L11,509 H6 Z" fill="#8090e8" stroke="#1a2070" stroke-width="0.8"/>
<rect x="34.5" y="516" width="5.5" height="5.5" fill="#fff" stroke="#111"/>
<rect x="46.5" y="504" width="5.5" height="5.5" fill="#8890e8" stroke="#111"/>
<path d="M40,516 L46,510" stroke="#111"/>
<!-- row14 array -->
<g stroke="#111" stroke-width="0.8"><rect x="6" y="532" width="5" height="5" fill="#8890e8"/><rect x="15" y="537" width="5" height="5" fill="#8890e8"/><rect x="6" y="544" width="5" height="5" fill="#fff"/><rect x="13" y="541" width="5" height="5" fill="#8890e8"/><rect x="19" y="545" width="5" height="5" fill="#8890e8"/></g>
<rect x="33" y="532" width="5" height="12" fill="#fff" stroke="#111" stroke-width="0.8"/>
<path d="M40,549 L52,538 L55,541 L43,552 Z" fill="#8890e8" stroke="#1a2070" stroke-width="0.7"/>
<path d="M38,534 H44 V537" fill="none" stroke="#111" stroke-width="0.7"/>
<!-- row15 -->
<path d="M6,565 L14,561 L24,564 V575 L15,578 L6,575 Z" fill="#4a5ad0" stroke="#1a2070" stroke-width="0.7"/>
<path d="M6,565 L14,561 L24,564 L15,567 Z" fill="#b0baf8"/>
<rect x="13" y="572" width="6" height="5" fill="#fff"/>
<path d="M33,574 H53 L51,577 H34 Z" fill="#5868d8"/>
<path d="M38,573 V563 M43,573 V562 M48,573 V563" stroke="#fff" stroke-width="1.4"/>
<path d="M36.5,564 L38,561 L39.5,564 M41.5,563 L43,560 L44.5,563 M46.5,564 L48,561 L49.5,564" fill="none" stroke="#fff" stroke-width="1"/>
<!-- row16 -->
<g fill="#fff" stroke="#111" stroke-width="0.9">
<rect x="5" y="588" width="3.5" height="3.5" fill="#8890e8"/><rect x="10.5" y="588" width="3.5" height="3.5" fill="#8890e8"/><rect x="16" y="588" width="3.5" height="3.5" fill="#8890e8"/>
<rect x="5" y="593.5" width="3.5" height="3.5" fill="#8890e8"/><rect x="10.5" y="593.5" width="3.5" height="3.5" fill="#8890e8"/><rect x="16" y="593.5" width="3.5" height="3.5" fill="#8890e8"/>
<rect x="5" y="599" width="3.5" height="3.5"/><rect x="10.5" y="599" width="3.5" height="3.5"/><rect x="16" y="599" width="3.5" height="3.5"/>
<rect x="39.5" y="587" width="6" height="4"/><rect x="39.5" y="593" width="6" height="4"/><rect x="39.5" y="599" width="6" height="4"/>
</g>
<path d="M42.5,586 V604" stroke="#c02020" stroke-width="1.6"/>
<!-- row17 -->
<path d="M7,617 L13,614 L15,628 L9,631 Z" fill="#f4f4f4" stroke="#222" stroke-width="0.8"/>
<path d="M12,630 L18,615 L23,617 L17,633 Z" fill="#7080e0" stroke="#1a2070" stroke-width="0.8"/>
<path d="M34,625 L39,622 L42,629 Q47,619 53,614 Q46,622 42,634 Z" fill="#111"/>
<!-- row18 -->
<path d="M6,648 L12,644 L18,647 V656 L12,659 L6,656 Z" fill="#c8c8c8" stroke="#333" stroke-width="0.7"/>
<path d="M15,659 L20,646 L25,659 Z" fill="#a8a8a8" stroke="#333" stroke-width="0.7"/>
<path d="M34,655 L43,648 L52,655 L43,661 Z" fill="#e8a830" stroke="#805000" stroke-width="0.7"/>
<path d="M43,648 L43,661 L52,655 Z" fill="#f8c860"/>
<path d="M40,646 L45,642 H51 V647 H45 Z" fill="#bbb" stroke="#222" stroke-width="0.7"/>
</svg>

<div class="vp" style="left:64px;top:155px;width:450px;height:246px"></div>
<svg class="a" style="left:64px;top:155px" width="450" height="246" viewBox="64 155 450 246">
<path d="M69.2,155V401M87.3,155V401M105.5,155V401M123.6,155V401M64,172.6H414.0M141.8,155V401M64,190.8H414.0M159.9,155V401M64,208.9H414.0M178.1,155V401M64,227.1H414.0M196.2,155V401M64,245.2H414.0M214.3,155V401M64,263.4H414.0M232.5,155V401M64,281.5H414.0M250.7,155V401M64,299.6H414.0M268.8,155V401M64,317.8H414.0M286.9,155V401M64,335.9H414.0M305.1,155V401M64,354.1H414.0M323.2,155V401M64,372.2H414.0M341.4,155V401M64,390.4H414.0M359.5,155V401M377.7,155V401M395.9,155V401M414.0,155V401" stroke="#878d95" stroke-width="1" fill="none" shape-rendering="crispEdges"/>
<path d="M65.5,155V401M72.8,155V401M76.4,155V401M80.0,155V401M83.7,155V401M90.9,155V401M94.6,155V401M98.2,155V401M101.8,155V401M109.1,155V401M64,158.1H414.0M112.7,155V401M64,161.7H414.0M116.3,155V401M64,165.3H414.0M120.0,155V401M64,169.0H414.0M127.2,155V401M64,176.2H414.0M130.9,155V401M64,179.9H414.0M134.5,155V401M64,183.5H414.0M138.1,155V401M64,187.1H414.0M145.4,155V401M64,194.4H414.0M149.0,155V401M64,198.0H414.0M152.6,155V401M64,201.6H414.0M156.3,155V401M64,205.3H414.0M163.5,155V401M64,212.5H414.0M167.2,155V401M64,216.2H414.0M170.8,155V401M64,219.8H414.0M174.4,155V401M64,223.4H414.0M181.7,155V401M64,230.7H414.0M185.3,155V401M64,234.3H414.0M188.9,155V401M64,237.9H414.0M192.6,155V401M64,241.6H414.0M199.8,155V401M64,248.8H414.0M203.5,155V401M64,252.5H414.0M207.1,155V401M64,256.1H414.0M210.7,155V401M64,259.7H414.0M218.0,155V401M64,267.0H414.0M221.6,155V401M64,270.6H414.0M225.2,155V401M64,274.2H414.0M228.9,155V401M64,277.9H414.0M236.1,155V401M64,285.1H414.0M239.8,155V401M64,288.8H414.0M243.4,155V401M64,292.4H414.0M247.0,155V401M64,296.0H414.0M254.3,155V401M64,303.3H414.0M257.9,155V401M64,306.9H414.0M261.5,155V401M64,310.5H414.0M265.2,155V401M64,314.2H414.0M272.4,155V401M64,321.4H414.0M276.1,155V401M64,325.1H414.0M279.7,155V401M64,328.7H414.0M283.3,155V401M64,332.3H414.0M290.6,155V401M64,339.6H414.0M294.2,155V401M64,343.2H414.0M297.8,155V401M64,346.8H414.0M301.5,155V401M64,350.5H414.0M308.7,155V401M64,357.7H414.0M312.4,155V401M64,361.4H414.0M316.0,155V401M64,365.0H414.0M319.6,155V401M64,368.6H414.0M326.9,155V401M64,375.9H414.0M330.5,155V401M64,379.5H414.0M334.1,155V401M64,383.1H414.0M337.8,155V401M64,386.8H414.0M345.0,155V401M64,394.0H414.0M348.7,155V401M64,397.7H414.0M352.3,155V401M355.9,155V401M363.2,155V401M366.8,155V401M370.4,155V401M374.1,155V401M381.3,155V401M385.0,155V401M388.6,155V401M392.2,155V401M399.5,155V401M403.1,155V401M406.7,155V401M410.4,155V401" stroke="#979ea6" stroke-width="1" fill="none" shape-rendering="crispEdges" opacity="0.45"/>
<path d="M232.5,281.5H414.0" stroke="#a04848" stroke-width="1.3"/>
<path d="M232.5,281.5V155" stroke="#3c9a3c" stroke-width="1.3"/>
<path d="M232.5,196V155" stroke="#28e028" stroke-width="2"/>
<rect x="187" y="181.5" width="91" height="199.5" fill="none" stroke="#cc1414" stroke-width="2"/>
<path d="M141,209 A178,178 0 0 1 323.5,209" fill="none" stroke="#f0e040" stroke-width="1.5"/>
<path d="M152,196 A80.5,80.5 0 0 0 232.5,276.5" fill="none" stroke="#1a1aee" stroke-width="2"/>
<path d="M146,196.5 H229" stroke="#c86a6a" stroke-width="1" stroke-dasharray="1.5 1.5" opacity="0.7"/>
<rect x="137.5" y="192.5" width="8" height="8" rx="2" fill="none" stroke="#f03030" stroke-width="1.6"/>
<path d="M243,196.5 H296" stroke="#f01818" stroke-width="2"/><path d="M292,192 L312,196.5 L292,201 Z" fill="#f01818"/>
<rect x="228.5" y="204.5" width="8" height="8" fill="none" stroke="#20e020" stroke-width="2"/>
<rect x="230.5" y="194.5" width="4" height="4" fill="#fff" stroke="#000" stroke-width="1.3"/>
<path d="M230,199 L206,223" stroke="#e8e8e8" stroke-width="1.2" stroke-dasharray="1.5 1.5"/>
<circle cx="203" cy="226" r="4.5" fill="none" stroke="#f4f4f4" stroke-width="1.3"/>
<path d="M272,155.8 H294" stroke="#e05050" stroke-width="1.2"/>
<path d="M101,337 V364.5 H131" fill="none" stroke="#6a7078" stroke-width="1.2"/>
<text x="104" y="338" font-family="Liberation Sans" font-weight="bold" font-size="11" fill="#5a6068">y</text>
<text x="133" y="366" font-family="Liberation Sans" font-weight="bold" font-size="11" fill="#5a6068">x</text>
<circle cx="333.6" cy="272.5" r="31" fill="#a6b41c" opacity="0.92"/>
<path d="M333.5,273.5 V299 L339.9,292.7 L344.7,302.3 L347.9,300.7 L343.1,291.1 L351.1,291.1 Z" fill="#fff" stroke="#000" stroke-width="2.2" stroke-linejoin="round"/><path d="M333.5,273.5 V299 L339.9,292.7 L344.7,302.3 L347.9,300.7 L343.1,291.1 L351.1,291.1 Z" fill="none" stroke="#f4f0c0" stroke-width="0.6" opacity="0.5" transform="translate(-1.5,0)"/>
</svg>
<div class="a" style="left:64px;top:155px;width:72px;height:19px;background:linear-gradient(#a2b5cd,#98adc9)"></div>
<div class="t" style="left:73px;top:159px;font-size:12px;color:#102040">Superior</div>
<div class="a" style="left:125px;top:158px;width:1px;height:14px;background:#111"></div>
<svg class="a" style="left:126px;top:160px" width="10" height="8"><path d="M1.5,2 H8.5 L5,6 Z" fill="#111"/></svg>
<div class="vp" style="left:64px;top:404px;width:450px;height:246px"></div>
<svg class="a" style="left:64px;top:404px" width="450" height="246" viewBox="64 404 450 246">
<path d="M67.2,404V650M75.2,404V650M83.1,404V650M91.0,404V650M98.9,404V650M106.8,404V650M114.8,404V650M122.7,404V650M138.5,404V650M146.4,404V650M154.4,404V650M162.3,404V650M170.2,404V650M64,408.2H514M178.1,404V650M64,416.1H514M186.0,404V650M64,424.0H514M194.0,404V650M64,432.0H514M201.9,404V650M64,439.9H514M217.7,404V650M64,455.7H514M225.6,404V650M64,463.6H514M233.6,404V650M64,471.6H514M241.5,404V650M64,479.5H514M249.4,404V650M64,487.4H514M257.3,404V650M64,495.3H514M265.2,404V650M64,503.2H514M273.2,404V650M64,511.2H514M281.1,404V650M64,519.1H514M296.9,404V650M64,534.9H514M304.8,404V650M64,542.8H514M312.8,404V650M64,550.8H514M320.7,404V650M64,558.7H514M328.6,404V650M64,566.6H514M336.5,404V650M64,574.5H514M344.4,404V650M64,582.4H514M352.4,404V650M64,590.4H514M360.3,404V650M64,598.3H514M376.1,404V650M64,614.1H514M384.0,404V650M64,622.0H514M392.0,404V650M64,630.0H514M399.9,404V650M64,637.9H514M407.8,404V650M64,645.8H514M415.7,404V650M423.6,404V650M431.6,404V650M439.5,404V650M455.3,404V650M463.2,404V650M471.2,404V650M479.1,404V650M487.0,404V650M494.9,404V650M502.8,404V650M510.8,404V650" stroke="#979ea6" stroke-width="1" fill="none" shape-rendering="crispEdges"/>
<path d="M130.6,404V650M209.8,404V650M64,447.8H514M289.0,404V650M64,527.0H514M368.2,404V650M64,606.2H514M447.4,404V650" stroke="#878d95" stroke-width="1" fill="none" shape-rendering="crispEdges"/>
<path d="M289,527V404" stroke="#3c9a3c" stroke-width="1.3"/>
<path d="M91,404 V527 M487,404 V527" stroke="#cc1414" stroke-width="2"/>
<path d="M64,527 H298" stroke="#e8b020" stroke-width="2"/>
<path d="M64,527 H289" stroke="#b84818" stroke-width="2" stroke-dasharray="2 2"/>
<path d="M368,527 H514" stroke="#e8c020" stroke-width="2"/>
<path d="M298,527 H352" stroke="#f01818" stroke-width="2"/><path d="M349,521.5 L369,527 L349,532.5 Z" fill="#f01818"/>
<path d="M289,524 V465" stroke="#1818f0" stroke-width="2"/><path d="M284.5,467 L289,447 L293.5,467 Z" fill="#1818f0"/>
<path d="M209,527 A80,80 0 0 0 289,607" fill="none" stroke="#30e030" stroke-width="2.2"/>
<path d="M287,529 L262,554" stroke="#e8e8e8" stroke-width="1.2" stroke-dasharray="1.5 1.5"/>
<circle cx="259" cy="557" r="5" fill="none" stroke="#f4f4f4" stroke-width="1.3"/>
<rect x="287" y="525" width="4" height="4" fill="#fff" stroke="#000" stroke-width="1.3"/>
<path d="M328.5,467.5 H349.5 M328.5,477 H349.5 M328.5,486.5 H349.5" stroke="#e05060" stroke-width="1.2"/><path d="M328.5,467 V487 M339,467 V487 M349.5,467 V487" stroke="#5a64e8" stroke-width="1.2"/>
<path d="M101,579 V612 H135" fill="none" stroke="#6a7078" stroke-width="1.2"/>
<text x="104" y="582" font-family="Liberation Sans" font-weight="bold" font-size="11" fill="#5a6068">z</text>
<text x="133" y="615" font-family="Liberation Sans" font-weight="bold" font-size="11" fill="#5a6068">x</text>
</svg>
<div class="a" style="left:64px;top:404px;width:64px;height:19px;background:#dadde2;border-radius:0 0 3px 0"></div>
<div class="t" style="left:72px;top:408px;font-size:11.4px;color:#3c3c44">Frontal</div>
<div class="a" style="left:117px;top:407px;width:1px;height:14px;background:#333"></div>
<svg class="a" style="left:119px;top:409px" width="10" height="8"><path d="M1.5,2 H8.5 L5,6 Z" fill="#333"/></svg>
<div class="vp" style="left:517px;top:404px;width:448px;height:246px"></div>
<svg class="a" style="left:517px;top:404px" width="448" height="246" viewBox="517 404 448 246">
<path d="M519.3,404V650M527.2,404V650M535.1,404V650M543.0,404V650M550.9,404V650M558.8,404V650M566.7,404V650M574.6,404V650M590.4,404V650M598.3,404V650M606.2,404V650M614.1,404V650M622.0,404V650M517,408.5H965M629.9,404V650M517,416.4H965M637.8,404V650M517,424.3H965M645.7,404V650M517,432.2H965M653.6,404V650M517,440.1H965M669.4,404V650M517,455.9H965M677.3,404V650M517,463.8H965M685.2,404V650M517,471.7H965M693.1,404V650M517,479.6H965M701.0,404V650M517,487.5H965M708.9,404V650M517,495.4H965M716.8,404V650M517,503.3H965M724.7,404V650M517,511.2H965M732.6,404V650M517,519.1H965M748.4,404V650M517,534.9H965M756.3,404V650M517,542.8H965M764.2,404V650M517,550.7H965M772.1,404V650M517,558.6H965M780.0,404V650M517,566.5H965M787.9,404V650M517,574.4H965M795.8,404V650M517,582.3H965M803.7,404V650M517,590.2H965M811.6,404V650M517,598.1H965M827.4,404V650M517,613.9H965M835.3,404V650M517,621.8H965M843.2,404V650M517,629.7H965M851.1,404V650M517,637.6H965M859.0,404V650M517,645.5H965M866.9,404V650M874.8,404V650M882.7,404V650M890.6,404V650M906.4,404V650M914.3,404V650M922.2,404V650M930.1,404V650M938.0,404V650M945.9,404V650M953.8,404V650M961.7,404V650" stroke="#979ea6" stroke-width="1" fill="none" shape-rendering="crispEdges"/>
<path d="M582.5,404V650M661.5,404V650M517,448.0H965M740.5,404V650M517,527.0H965M819.5,404V650M517,606.0H965M898.5,404V650" stroke="#878d95" stroke-width="1" fill="none" shape-rendering="crispEdges"/>
<path d="M740.5,527V404" stroke="#3c9a3c" stroke-width="1.3"/>
<path d="M517,527 H965" stroke="#e01818" stroke-width="2"/>
<path d="M554,578 V580 M554,579 V579" stroke="none"/>
<path d="M553,583 V612 H585" fill="none" stroke="#6a7078" stroke-width="1.2"/>
<text x="556" y="584" font-family="Liberation Sans" font-weight="bold" font-size="11" fill="#5a6068">z</text>
<text x="584" y="616" font-family="Liberation Sans" font-weight="bold" font-size="11" fill="#5a6068">y</text>
</svg>
<div class="a" style="left:517px;top:404px;width:71px;height:19px;background:#dadde2;border-radius:0 0 3px 0"></div>
<div class="t" style="left:526px;top:408px;font-size:11.4px;color:#3c3c44">Derecha</div>
<div class="a" style="left:578px;top:407px;width:1px;height:14px;background:#333"></div>
<svg class="a" style="left:579px;top:409px" width="10" height="8"><path d="M1.5,2 H8.5 L5,6 Z" fill="#333"/></svg>
<div class="vp" style="left:517px;top:155px;width:448px;height:246px"></div>
<svg class="a" style="left:517px;top:155px" width="448" height="246" viewBox="517 155 448 246">
<path d="M-290.3,417.2L654.7,118.7M-290.3,417.2L-492.2,9714.1M-290.9,446.8L673.6,121.4M-153.1,373.8L2912.6,9714.1M-291.7,480.7L693.3,124.2M-40.9,338.4L6317.5,9714.1M-292.5,520.0L713.9,127.1M52.5,308.9L8055.4,8092.7M-293.5,566.1L735.3,130.2M131.6,283.9L3339.4,2611.6M-294.7,620.9L757.7,133.4M199.4,262.5L2427.7,1552.0M-296.1,687.0L781.1,136.8M258.1,243.9L2040.1,1101.5M-297.9,768.5L805.6,140.3M309.4,227.7L1825.6,852.1M-300.1,871.5L831.2,144.0M354.8,213.4L1689.3,693.8M-303.1,1005.5L858.1,147.8M395.0,200.7L1595.2,584.3M-307.0,1187.2L886.3,151.8M431.1,189.3L1526.2,504.2M-312.7,1447.7L915.9,156.1M463.5,179.0L1473.4,442.9M-321.4,1852.1L947.1,160.6M492.8,169.8L1431.8,394.5M-336.9,2565.5L980.0,165.3M519.5,161.3L1398.2,355.4M-371.6,4160.9L1014.6,170.2M543.9,153.7L1370.4,323.1M-342.1,9714.1L1051.2,175.5M566.2,146.6L1347.0,296.0M1616.4,9714.1L1089.9,181.0M586.7,140.1L1327.2,272.9M3574.9,9714.1L1131.0,186.9M605.7,134.1L1310.0,253.0M5533.5,9714.1L1174.6,193.2M623.2,128.6L1295.1,235.6M7492.0,9714.1L1221.0,199.8M639.5,123.4L1282.0,220.4M9450.5,9714.1L1270.4,206.9M654.7,118.7L1270.4,206.9" stroke="#868c94" stroke-width="1" fill="none"/>
<path d="M-290.3,419.9L656.5,118.9M-275.2,412.4L-151.8,9714.1M-290.4,422.8L658.4,119.2M-260.5,407.7L188.7,9714.1M-290.5,425.6L660.3,119.5M-246.0,403.2L529.2,9714.1M-290.5,428.5L662.1,119.7M-231.9,398.7L869.7,9714.1M-290.6,431.5L664.0,120.0M-218.1,394.4L1210.2,9714.1M-290.7,434.4L665.9,120.3M-204.5,390.1L1550.7,9714.1M-290.7,437.5L667.8,120.5M-191.3,385.9L1891.2,9714.1M-290.8,440.5L669.8,120.8M-178.3,381.8L2231.7,9714.1M-290.9,443.6L671.7,121.1M-165.6,377.8L2572.2,9714.1M-291.0,449.9L675.5,121.6M-140.9,370.0L3253.1,9714.1M-291.1,453.2L677.5,121.9M-128.9,366.2L3593.6,9714.1M-291.1,456.4L679.4,122.2M-117.2,362.5L3934.1,9714.1M-291.2,459.8L681.4,122.5M-105.6,358.8L4274.6,9714.1M-291.3,463.1L683.4,122.8M-94.3,355.3L4615.1,9714.1M-291.3,466.5L685.3,123.0M-83.3,351.8L4955.6,9714.1M-291.4,470.0L687.3,123.3M-72.4,348.3L5296.1,9714.1M-291.5,473.5L689.3,123.6M-61.7,345.0L5636.6,9714.1M-291.6,477.1L691.3,123.9M-51.2,341.6L5977.0,9714.1M-291.7,484.4L695.3,124.5M-30.8,335.2L6658.0,9714.1M-291.8,488.1L697.4,124.8M-20.9,332.1L6998.5,9714.1M-291.9,491.9L699.4,125.1M-11.1,329.0L7339.0,9714.1M-292.0,495.7L701.5,125.4M-1.6,326.0L7679.5,9714.1M-292.1,499.6L703.5,125.7M7.8,323.0L8020.0,9714.1M-292.2,503.6L705.6,125.9M17.1,320.1L8360.5,9714.1M-292.2,507.6L707.6,126.2M26.2,317.2L8701.0,9714.1M-292.3,511.7L709.7,126.5M35.1,314.4L9041.4,9714.1M-292.4,515.8L711.8,126.8M43.9,311.6L9381.9,9714.1M-292.6,524.3L716.0,127.4M61.0,306.2L6851.1,6693.0M-292.7,528.6L718.1,127.7M69.4,303.5L6001.4,5705.4M-292.8,533.1L720.2,128.0M77.6,300.9L5369.8,4971.3M-292.9,537.5L722.4,128.4M85.7,298.4L4881.8,4404.2M-293.0,542.1L724.5,128.7M93.7,295.9L4493.5,3952.9M-293.1,546.7L726.6,129.0M101.5,293.4L4177.1,3585.2M-293.2,551.5L728.8,129.3M109.2,291.0L3914.4,3279.9M-293.3,556.3L731.0,129.6M116.8,288.6L3692.8,3022.3M-293.4,561.1L733.1,129.9M124.3,286.2L3503.3,2802.1M-293.6,571.2L737.5,130.5M138.9,281.6L3196.3,2445.3M-293.7,576.3L739.7,130.8M146.0,279.3L3070.2,2298.7M-293.8,581.5L741.9,131.2M153.0,277.1L2958.3,2168.7M-294.0,586.8L744.2,131.5M159.9,274.9L2858.3,2052.4M-294.1,592.3L746.4,131.8M166.7,272.8L2768.4,1948.0M-294.2,597.8L748.6,132.1M173.5,270.7L2687.2,1853.5M-294.3,603.4L750.9,132.4M180.1,268.6L2613.4,1767.8M-294.4,609.1L753.2,132.8M186.6,266.5L2546.1,1689.5M-294.6,614.9L755.4,133.1M193.0,264.5L2484.4,1617.9M-294.8,626.9L760.0,133.8M205.6,260.5L2375.5,1491.2M-295.0,633.1L762.3,134.1M211.8,258.6L2327.1,1435.0M-295.1,639.4L764.6,134.4M217.8,256.6L2282.2,1382.8M-295.2,645.8L767.0,134.7M223.8,254.8L2240.4,1334.3M-295.4,652.3L769.3,135.1M229.7,252.9L2201.4,1289.0M-295.5,659.0L771.6,135.4M235.6,251.0L2165.0,1246.6M-295.7,665.8L774.0,135.8M241.3,249.2L2130.8,1206.9M-295.8,672.7L776.4,136.1M247.0,247.4L2098.7,1169.6M-296.0,679.8L778.7,136.4M252.6,245.7L2068.6,1134.6M-296.3,694.4L783.5,137.1M263.5,242.2L2013.3,1070.3M-296.5,702.0L785.9,137.5M268.9,240.5L1987.9,1040.8M-296.6,709.7L788.3,137.8M274.2,238.8L1963.8,1012.8M-296.8,717.5L790.8,138.2M279.4,237.2L1941.0,986.3M-297.0,725.6L793.2,138.5M284.6,235.6L1919.4,961.2M-297.2,733.8L795.7,138.9M289.7,233.9L1898.8,937.2M-297.3,742.2L798.1,139.2M294.7,232.4L1879.2,914.4M-297.5,750.8L800.6,139.6M299.7,230.8L1860.5,892.7M-297.7,759.6L803.1,139.9M304.6,229.2L1842.6,872.0M-298.1,777.8L808.1,140.6M314.2,226.2L1809.3,833.2M-298.3,787.2L810.6,141.0M319.0,224.7L1793.7,815.1M-298.5,796.8L813.2,141.4M323.6,223.2L1778.7,797.7M-298.7,806.7L815.7,141.7M328.2,221.8L1764.4,781.0M-299.0,816.8L818.3,142.1M332.8,220.3L1750.6,765.0M-299.2,827.2L820.8,142.5M337.3,218.9L1737.4,749.7M-299.4,837.9L823.4,142.8M341.7,217.5L1724.7,734.9M-299.7,848.8L826.0,143.2M346.1,216.1L1712.5,720.7M-299.9,860.0L828.6,143.6M350.5,214.7L1700.7,707.0M-300.4,883.3L833.9,144.3M359.0,212.1L1678.4,681.1M-300.7,895.4L836.5,144.7M363.2,210.7L1667.8,668.8M-300.9,907.8L839.2,145.1M367.3,209.4L1657.7,657.0M-301.2,920.6L841.8,145.5M371.4,208.1L1647.8,645.6M-301.5,933.8L844.5,145.9M375.5,206.8L1638.3,634.5M-301.8,947.3L847.2,146.2M379.5,205.6L1629.1,623.8M-302.1,961.2L849.9,146.6M383.4,204.3L1620.2,613.5M-302.4,975.5L852.6,147.0M387.4,203.1L1611.6,603.5M-302.7,990.3L855.4,147.4M391.2,201.9L1603.2,593.7M-303.4,1021.1L860.9,148.2M398.8,199.5L1587.3,575.2M-303.7,1037.3L863.6,148.6M402.6,198.3L1579.7,566.4M-304.1,1054.0L866.4,149.0M406.3,197.1L1572.3,557.8M-304.5,1071.2L869.2,149.4M409.9,196.0L1565.1,549.5M-304.9,1088.9L872.0,149.8M413.5,194.8L1558.2,541.4M-305.3,1107.3L874.9,150.2M417.1,193.7L1551.4,533.5M-305.7,1126.2L877.7,150.6M420.7,192.6L1544.8,525.9M-306.1,1145.9L880.5,151.0M424.2,191.5L1538.4,518.4M-306.5,1166.2L883.4,151.4M427.6,190.4L1532.2,511.2M-307.5,1209.0L889.2,152.3M434.5,188.2L1520.3,497.3M-308.0,1231.6L892.1,152.7M437.8,187.1L1514.5,490.6M-308.5,1255.1L895.0,153.1M441.2,186.1L1508.9,484.1M-309.0,1279.4L898.0,153.5M444.5,185.1L1503.5,477.8M-309.6,1304.7L900.9,153.9M447.7,184.0L1498.1,471.6M-310.1,1331.0L903.9,154.4M450.9,183.0L1493.0,465.6M-310.7,1358.4L906.9,154.8M454.1,182.0L1487.9,459.7M-311.3,1386.9L909.9,155.2M457.3,181.0L1483.0,454.0M-312.0,1416.6L912.9,155.7M460.4,180.0L1478.1,448.3M-313.4,1480.0L919.0,156.5M466.6,178.1L1468.8,437.5M-314.1,1513.9L922.0,157.0M469.6,177.1L1464.3,432.3M-314.9,1549.3L925.1,157.4M472.6,176.2L1460.0,427.2M-315.7,1586.4L928.2,157.9M475.6,175.2L1455.7,422.2M-316.5,1625.3L931.3,158.3M478.5,174.3L1451.5,417.4M-317.4,1666.1L934.4,158.7M481.5,173.4L1447.4,412.6M-318.3,1709.1L937.6,159.2M484.3,172.5L1443.4,407.9M-319.3,1754.2L940.7,159.7M487.2,171.6L1439.4,403.4M-320.4,1801.8L943.9,160.1M490.0,170.7L1435.6,398.9M-322.6,1905.2L950.3,161.0M495.6,168.9L1428.2,390.3M-323.8,1961.4L953.5,161.5M498.4,168.0L1424.5,386.1M-325.1,2020.9L956.8,162.0M501.1,167.2L1421.0,382.0M-326.5,2084.2L960.0,162.4M503.8,166.3L1417.6,377.9M-328.0,2151.6L963.3,162.9M506.5,165.5L1414.2,374.0M-329.5,2223.4L966.6,163.4M509.1,164.6L1410.8,370.1M-331.2,2300.1L969.9,163.8M511.8,163.8L1407.6,366.3M-333.0,2382.3L973.2,164.3M514.4,163.0L1404.4,362.6M-334.9,2470.5L976.6,164.8M517.0,162.2L1401.2,359.0M-339.2,2668.0L983.3,165.8M522.0,160.5L1395.2,351.9M-341.6,2779.0L986.7,166.2M524.6,159.8L1392.2,348.5M-344.2,2899.5L990.2,166.7M527.0,159.0L1389.3,345.1M-347.1,3031.0L993.6,167.2M529.5,158.2L1386.4,341.8M-350.2,3174.8L997.0,167.7M532.0,157.4L1383.6,338.5M-353.6,3333.0L1000.5,168.2M534.4,156.6L1380.9,335.3M-357.4,3507.6L1004.0,168.7M536.8,155.9L1378.2,332.2M-361.6,3701.4L1007.5,169.2M539.2,155.1L1375.5,329.1M-366.3,3917.8L1011.1,169.7M541.5,154.4L1372.9,326.1M-377.6,4436.1L1018.2,170.7M546.2,152.9L1367.9,320.2M-384.4,4750.0L1021.8,171.3M548.5,152.2L1365.4,317.3M-392.3,5111.7L1025.4,171.8M550.8,151.5L1363.0,314.5M-401.4,5532.7L1029.0,172.3M553.0,150.8L1360.6,311.7M-412.2,6029.1L1032.7,172.8M555.3,150.1L1358.2,309.0M-425.1,6623.1L1036.3,173.4M557.5,149.4L1355.9,306.3M-440.8,7346.4L1040.0,173.9M559.7,148.7L1353.6,303.6M-460.4,8246.7L1043.7,174.4M561.9,148.0L1351.4,301.0M-485.4,9397.9L1047.5,174.9M564.0,147.3L1349.2,298.5M-146.2,9714.1L1055.0,176.0M568.3,145.9L1344.9,293.5M49.6,9714.1L1058.8,176.6M570.4,145.3L1342.8,291.1M245.5,9714.1L1062.6,177.1M572.5,144.6L1340.7,288.7M441.3,9714.1L1066.4,177.7M574.6,143.9L1338.7,286.3M637.2,9714.1L1070.3,178.2M576.7,143.3L1336.7,284.0M833.0,9714.1L1074.2,178.8M578.7,142.6L1334.7,281.7M1028.9,9714.1L1078.1,179.3M580.7,142.0L1332.8,279.4M1224.7,9714.1L1082.0,179.9M582.7,141.4L1330.9,277.2M1420.6,9714.1L1086.0,180.5M584.7,140.7L1329.0,275.0M1812.3,9714.1L1093.9,181.6M588.7,139.5L1325.3,270.8M2008.1,9714.1L1098.0,182.2M590.6,138.9L1323.5,268.7M2204.0,9714.1L1102.0,182.8M592.5,138.3L1321.8,266.6M2399.8,9714.1L1106.1,183.3M594.5,137.7L1320.0,264.6M2595.7,9714.1L1110.2,183.9M596.4,137.1L1318.3,262.6M2791.5,9714.1L1114.3,184.5M598.3,136.5L1316.6,260.6M2987.4,9714.1L1118.4,185.1M600.1,135.9L1314.9,258.6M3183.2,9714.1L1122.6,185.7M602.0,135.3L1313.3,256.7M3379.1,9714.1L1126.8,186.3M603.8,134.7L1311.6,254.8M3770.8,9714.1L1135.2,187.5M607.5,133.6L1308.4,251.1M3966.6,9714.1L1139.5,188.1M609.3,133.0L1306.9,249.3M4162.5,9714.1L1143.8,188.8M611.1,132.4L1305.3,247.5M4358.3,9714.1L1148.1,189.4M612.8,131.9L1303.8,245.7M4554.2,9714.1L1152.5,190.0M614.6,131.3L1302.3,244.0M4750.0,9714.1L1156.8,190.6M616.3,130.8L1300.8,242.3M4945.9,9714.1L1161.2,191.3M618.1,130.2L1299.4,240.6M5141.8,9714.1L1165.7,191.9M619.8,129.7L1297.9,238.9M5337.6,9714.1L1170.1,192.5M621.5,129.1L1296.5,237.3M5729.3,9714.1L1179.1,193.8M624.9,128.1L1293.7,234.0M5925.2,9714.1L1183.6,194.5M626.6,127.5L1292.4,232.4M6121.0,9714.1L1188.2,195.1M628.2,127.0L1291.0,230.9M6316.9,9714.1L1192.8,195.8M629.9,126.5L1289.7,229.3M6512.7,9714.1L1197.4,196.4M631.5,126.0L1288.4,227.8M6708.6,9714.1L1202.1,197.1M633.1,125.5L1287.0,226.3M6904.4,9714.1L1206.8,197.8M634.7,124.9L1285.8,224.8M7100.3,9714.1L1211.5,198.5M636.3,124.4L1284.5,223.3M7296.1,9714.1L1216.2,199.1M637.9,123.9L1283.2,221.8M7687.8,9714.1L1225.8,200.5M641.1,122.9L1280.8,219.0M7883.7,9714.1L1230.6,201.2M642.6,122.5L1279.6,217.6M8079.5,9714.1L1235.5,201.9M644.2,122.0L1278.4,216.2M8275.4,9714.1L1240.4,202.6M645.7,121.5L1277.2,214.8M8471.2,9714.1L1245.3,203.3M647.2,121.0L1276.0,213.4M8667.1,9714.1L1250.2,204.0M648.7,120.5L1274.9,212.1M8862.9,9714.1L1255.2,204.7M650.2,120.1L1273.7,210.8M9058.8,9714.1L1260.2,205.4M651.7,119.6L1272.6,209.5M9254.6,9714.1L1265.3,206.2M653.2,119.1L1271.5,208.2" stroke="#a0a6ae" stroke-width="0.5" fill="none" opacity="0.35"/>
<path d="M740.6,278.3L1526.2,504.2" stroke="#a04848" stroke-width="1.6"/>
<path d="M740.6,278.3L886.3,151.8" stroke="#3c9a3c" stroke-width="1.6"/>
<path d="M377.3,408.4L678.1,602.1M253.6,151.9L641.3,273.3M377.3,408.4L253.6,151.9M678.1,602.1L933.2,209.3M641.3,273.3L963.1,61.1M678.1,602.1L641.3,273.3M933.2,209.3L760.1,177.2M963.1,61.1L762.6,48.8M933.2,209.3L963.1,61.1M760.1,177.2L377.3,408.4M762.6,48.8L253.6,151.9M760.1,177.2L762.6,48.8" stroke="#cc1414" stroke-width="2" fill="none"/>
<polyline points="662.0,176.9 671.2,176.9 680.3,177.0 689.3,177.1 698.4,177.4 707.4,177.7 716.5,178.1 725.5,178.6 734.5,179.1 743.5,179.8 752.5,180.5 761.6,181.4 770.6,182.3 779.7,183.3 788.8,184.4 798.0,185.6 807.1,187.0 816.4,188.4 825.6,189.9 834.9,191.5 844.3,193.3 853.7,195.1 863.2,197.1 872.8,199.2 882.5,201.4 892.2,203.7 902.0,206.2 912.0,208.9 922.0,211.7 932.2,214.6 942.5,217.7 952.9,221.0 963.4,224.4 974.1,228.1 985.0,231.9 996.0,236.0 1007.3,240.2 1018.7,244.7 1030.3,249.5 1042.1,254.5" fill="none" stroke="#f0e040" stroke-width="1.5"/>
<path d="M678,171.5 L826,201" stroke="#d05050" stroke-width="1.2" stroke-dasharray="1.5 2" opacity="0.75"/>
<rect x="671.5" y="167.5" width="7.5" height="7.5" fill="none" stroke="#f02020" stroke-width="1.6"/>
<path d="M829,199 L834,155" stroke="#1818f0" stroke-width="2"/>
<path d="M759,188 Q742,205 760,216 Q775,224 795,233" fill="none" stroke="#1a1aee" stroke-width="2"/>
<path d="M758,189 Q760,230 790,256 Q805,268 823,272" fill="none" stroke="#30e030" stroke-width="2.4"/>
<path d="M795,233 Q795,265 805,275 Q815,280 822,272" fill="none" stroke="#f02020" stroke-width="1.6"/>
<path d="M830,199 L851,181 M851,181 L866,169" stroke="#30e030" stroke-width="2.2"/><path d="M846,178 L856,177 L851,186 Z" fill="#30e030"/>
<path d="M840,203 L890,214" stroke="#f01818" stroke-width="2"/><path d="M888,208.5 L909,217 L886,220 Z" fill="#f01818"/>
<rect x="814.5" y="205" width="9.5" height="9.5" fill="none" stroke="#20e020" stroke-width="2"/>
<path d="M826,203 L791,231" stroke="#e8e8e8" stroke-width="1.2" stroke-dasharray="1.5 1.5"/>
<circle cx="788" cy="233.5" r="5" fill="none" stroke="#f4f4f4" stroke-width="1.3"/>
<rect x="827" y="199" width="4" height="4" fill="#fff" stroke="#000" stroke-width="1.3"/>
<path d="M875.5,156 L874.5,168 M886,156 L885,169.5 M897,156 L896,171.5" stroke="#5a5ae8" stroke-width="1.3"/><path d="M876,158 L896,161 M874.5,168 L896,171.5" stroke="#e05050" stroke-width="1.2"/>
<path d="M553,338 V365 L580,372 M553,365 L567.5,352" fill="none" stroke="#6a7078" stroke-width="1.2"/>
<text x="555" y="340" font-family="Liberation Sans" font-weight="bold" font-size="11" fill="#5a6068">z</text>
<text x="569" y="354" font-family="Liberation Sans" font-weight="bold" font-size="11" fill="#5a6068">y</text>
<text x="582" y="375" font-family="Liberation Sans" font-weight="bold" font-size="11" fill="#5a6068">x</text>
</svg>
<div class="a" style="left:517px;top:155px;width:87px;height:19px;background:#dadde2;border-radius:0 0 3px 0"></div>
<div class="t" style="left:525px;top:159px;font-size:11.4px;color:#3c3c44">Perspectiva</div>
<div class="a" style="left:593px;top:158px;width:1px;height:14px;background:#333"></div>
<svg class="a" style="left:594px;top:160px" width="10" height="8"><path d="M1.5,2 H8.5 L5,6 Z" fill="#333"/></svg>
<div class="a" style="left:965px;top:155px;width:315px;height:517px;background:#e0e4e9"></div>
<div class="a" style="left:972px;top:158px;width:306px;height:1px;background:#b9bfc7"></div>
<div class="a" style="left:972px;top:158px;width:1px;height:506px;background:#a9b0b9"></div>
<svg class="a" style="left:965px;top:155px" width="315" height="52" viewBox="965 155 315 52">
<defs><linearGradient id="ptg" x1="0" y1="0" x2="0" y2="1"><stop offset="0" stop-color="#e6ebf2"/><stop offset="1" stop-color="#d2dae5"/></linearGradient><radialGradient id="psph" cx="0.35" cy="0.3" r="0.75"><stop offset="0" stop-color="#ddd"/><stop offset="0.6" stop-color="#777"/><stop offset="1" stop-color="#333"/></radialGradient></defs>
<path d="M1186,184.5 V166 Q1186,163.5 1189,163.5 H1254 Q1256,163.5 1258,165.5 L1272,184.5" fill="url(#ptg)" stroke="#a9b3c0" stroke-width="1"/>
<path d="M1115,184.5 V166 Q1115,163.5 1118,163.5 H1175 Q1177,163.5 1179,165.5 L1193,184.5" fill="url(#ptg)" stroke="#a9b3c0" stroke-width="1"/>
<path d="M973,184.5 V166 Q973,163.5 976,163.5 H1033 Q1035,163.5 1037,165.5 L1051,184.5" fill="url(#ptg)" stroke="#a9b3c0" stroke-width="1"/>
<path d="M973,184.5 H1278" stroke="#a9b3c0"/>
<path d="M1043,185 V166 Q1043,163.5 1046,163.5 H1103 Q1105,163.5 1107,165.5 L1126,185 Z" fill="#f3f5f8" stroke="#a9b3c0" stroke-width="1"/>
<rect x="1043.5" y="184" width="82" height="2" fill="#f3f5f8"/>
<rect x="973" y="185" width="305" height="20" fill="#f3f5f8"/>
<path d="M973,205.5 H1278" stroke="#b0b7c0"/>
<circle cx="985" cy="174" r="5.5" fill="none" stroke="#d03030" stroke-width="3"/>
<path d="M985,168.5 A5.5,5.5 0 0 1 990.5,174" fill="none" stroke="#e0c020" stroke-width="3"/><path d="M990.5,174 A5.5,5.5 0 0 1 985,179.5" fill="none" stroke="#30b0d0" stroke-width="3"/><path d="M985,179.5 A5.5,5.5 0 0 1 979.5,174" fill="none" stroke="#4040d0" stroke-width="3"/>
<path d="M1048,167 L1061,166.5 L1064,170 L1062,178 L1055,181 L1048,175 Z" fill="#2030a0"/><path d="M1048,167 L1061,166.5 L1064,170 L1062,175.5 L1055,178 L1048,172.5 Z" fill="#fff"/><path d="M1048,167 L1061,166.5 L1064,170 L1062,173 L1055,175.5 L1048,170.5 Z" fill="#e04010"/>
<rect x="1120.5" y="167.5" width="13" height="10" fill="#888" stroke="#111" stroke-width="1.2"/><rect x="1122" y="169" width="10" height="7" fill="#d8d8d8"/><path d="M1124,179.5 H1130" stroke="#111" stroke-width="2"/>
<rect x="1191" y="167" width="14" height="14" fill="#c8d0f0" stroke="#555" stroke-width="0.8"/><rect x="1191" y="167" width="14" height="2.5" fill="#3040a0"/><circle cx="1198" cy="175.5" r="4.8" fill="#3848c0"/><text x="1198" y="179" font-family="Liberation Sans" font-weight="bold" font-size="9" fill="#fff" text-anchor="middle">?</text>
<g transform="translate(1262,168)"><path d="M9,1.5 L10.5,1.5 L11,3.2 L12.6,3.9 L14.1,3 L15.2,4.1 L14.3,5.6 L15,7.2 L16.7,7.7 V9.3 L15,9.8 L14.3,11.4 L15.2,12.9 L14.1,14 L12.6,13.1 L11,13.8 L10.5,15.5 H8.5 L8,13.8 L6.4,13.1 L4.9,14 L3.8,12.9 L4.7,11.4 L4,9.8 L2.3,9.3 V7.7 L4,7.2 L4.7,5.6 L3.8,4.1 L4.9,3 L6.4,3.9 L8,3.2 L8.5,1.5 Z" fill="none" stroke="#666" stroke-width="0.9"/><circle cx="9.5" cy="8.5" r="2" fill="none" stroke="#666" stroke-width="0.9"/></g>
<path d="M980.5,188.5 H986 L989,191.5 V201 H980.5 Z" fill="#eee" stroke="#222" stroke-width="1"/>
<path d="M998.5,188.5 H1003 L1005,190.5 V197 H998.5 Z" fill="#eee" stroke="#222"/><path d="M1002.5,192.5 H1007 L1009.5,195 V201 H1002.5 Z" fill="#eee" stroke="#222"/>
<path d="M1019,189 L1031,201 M1031,189 L1019,201" stroke="#333" stroke-width="2.2"/>
<path d="M1039.5,198.5 L1046,191.5 L1052.5,198.5 Z" fill="#aaa" stroke="#333"/>
<path d="M1060.5,191.5 L1067,198.5 L1073.5,191.5 Z" fill="#aaa" stroke="#333"/>
<path d="M1083,195 L1091,189 V201 Z" fill="#bbb"/>
<path d="M1102,189 H1116 L1111,195 V201 H1107 V195 Z" fill="#666" stroke="#333" stroke-width="0.8"/>
<path d="M1124.5,189 H1131 L1134,192 V201 H1124.5 Z M1127,193 H1132 M1127,196 H1132 M1129.5,191 V200" fill="none" stroke="#aaa"/>
<path d="M1145,201 L1153,192" stroke="#222" stroke-width="2"/><path d="M1148,191 L1152,188 L1158,193 L1155,195 L1153,193 L1151,195 Z" fill="#333"/>
<circle cx="1172" cy="195" r="6.5" fill="url(#psph)"/><text x="1172" y="199.5" font-family="Liberation Sans" font-weight="bold" font-size="11" fill="#fff" text-anchor="middle">?</text>
</svg>
<div class="a" style="left:973px;top:206px;width:305px;height:22px;background:linear-gradient(#ffffff,#f1f2f4);border-bottom:1px solid #d5d9de"></div>
<div class="a" style="left:1102px;top:206px;width:1px;height:22px;background:#e4e7eb"></div>
<div class="a" style="left:1118px;top:206px;width:1px;height:22px;background:#e4e7eb"></div>
<div class="a" style="left:1135px;top:206px;width:1px;height:22px;background:#e4e7eb"></div>
<div class="a" style="left:1152px;top:206px;width:1px;height:22px;background:#e4e7eb"></div>
<div class="a" style="left:1169px;top:206px;width:1px;height:22px;background:#e4e7eb"></div>
<div class="a" style="left:1249px;top:206px;width:1px;height:22px;background:#e4e7eb"></div>
<div class="t" style="left:980px;top:213px;font-size:11px;color:#1a1a2a">Nombre</div>
<div class="t" style="left:1176px;top:213px;font-size:11px;color:#1a1a2a">Material</div>
<div class="t" style="left:1257px;top:213px;font-size:11px;color:#1a1a2a">Tipo</div>
<div class="a" style="left:973px;top:229px;width:305px;height:423px;background:#fff"></div>
<div class="a" style="left:973px;top:247px;width:305px;height:17px;background:#3497fc;border-top:1px solid #2f80cc;border-bottom:1px dotted #1d5fa8"></div>
<div class="t" style="left:982px;top:234px;font-size:11.4px;font-weight:bold;color:#111">Predeterminada</div>
<svg class="a" style="left:1104px;top:233px" width="11" height="11"><path d="M1,6 L4,9.5 L10,1.5" fill="none" stroke="#111" stroke-width="2"/></svg>
<div class="a" style="left:1155px;top:232px;width:12px;height:12px;background:#000"></div>
<div class="t" style="left:1253px;top:234px;font-size:11.4px;font-weight:bold;color:#111">Cont</div>
<div class="t" style="left:981px;top:250px;font-size:11px;color:#fff">caja contenedora</div>
<svg class="a" style="left:1121px;top:248px" width="11" height="15"><path d="M3,10 Q0.5,7.5 0.8,5 Q1.2,0.8 5,0.8 Q8.8,0.8 9.2,5 Q9.5,7.5 7,10 V12.5 H3 Z" fill="#f4f08a" stroke="#333" stroke-width="0.9"/><path d="M3.5,13.5 H6.5" stroke="#333"/></svg>
<svg class="a" style="left:1138px;top:248px" width="13" height="14"><rect x="0.5" y="6.5" width="7.5" height="6.5" fill="#fff" stroke="#111" stroke-width="1.1"/><path d="M6.5,6.5 V3.5 Q6.5,0.8 9,0.8 Q11.5,0.8 11.5,3.5 V5" fill="none" stroke="#111" stroke-width="1.1"/></svg>
<div class="a" style="left:1155px;top:249px;width:12px;height:12px;background:#d40000;border:1px solid #fff"></div>
<div class="t" style="left:1253px;top:250px;font-size:11px;color:#fff">Contin</div>
<div class="t" style="left:981px;top:267px;font-size:11px;color:#111">Capa 02</div>
<svg class="a" style="left:1121px;top:265px" width="11" height="15"><path d="M3,10 Q0.5,7.5 0.8,5 Q1.2,0.8 5,0.8 Q8.8,0.8 9.2,5 Q9.5,7.5 7,10 V12.5 H3 Z" fill="#f4f08a" stroke="#333" stroke-width="0.9"/><path d="M3.5,13.5 H6.5" stroke="#333"/></svg>
<svg class="a" style="left:1138px;top:265px" width="13" height="14"><rect x="0.5" y="6.5" width="7.5" height="6.5" fill="#fff" stroke="#111" stroke-width="1.1"/><path d="M6.5,6.5 V3.5 Q6.5,0.8 9,0.8 Q11.5,0.8 11.5,3.5 V5" fill="none" stroke="#111" stroke-width="1.1"/></svg>
<div class="a" style="left:1155px;top:266px;width:12px;height:12px;background:#7a30c8;border:1px solid #111"></div>
<div class="t" style="left:1253px;top:267px;font-size:11px;color:#111">Contin</div>
<div class="t" style="left:981px;top:284px;font-size:11px;color:#111">Capa 03</div>
<svg class="a" style="left:1121px;top:282px" width="11" height="15"><path d="M3,10 Q0.5,7.5 0.8,5 Q1.2,0.8 5,0.8 Q8.8,0.8 9.2,5 Q9.5,7.5 7,10 V12.5 H3 Z" fill="#f4f08a" stroke="#333" stroke-width="0.9"/><path d="M3.5,13.5 H6.5" stroke="#333"/></svg>
<svg class="a" style="left:1138px;top:282px" width="13" height="14"><rect x="0.5" y="6.5" width="7.5" height="6.5" fill="#fff" stroke="#111" stroke-width="1.1"/><path d="M6.5,6.5 V3.5 Q6.5,0.8 9,0.8 Q11.5,0.8 11.5,3.5 V5" fill="none" stroke="#111" stroke-width="1.1"/></svg>
<div class="a" style="left:1155px;top:283px;width:12px;height:12px;background:#0000f0;border:1px solid #111"></div>
<div class="t" style="left:1253px;top:284px;font-size:11px;color:#111">Contin</div>
<div class="t" style="left:981px;top:301px;font-size:11px;color:#111">Capa 04</div>
<svg class="a" style="left:1121px;top:299px" width="11" height="15"><path d="M3,10 Q0.5,7.5 0.8,5 Q1.2,0.8 5,0.8 Q8.8,0.8 9.2,5 Q9.5,7.5 7,10 V12.5 H3 Z" fill="#f4f08a" stroke="#333" stroke-width="0.9"/><path d="M3.5,13.5 H6.5" stroke="#333"/></svg>
<svg class="a" style="left:1138px;top:299px" width="13" height="14"><rect x="0.5" y="6.5" width="7.5" height="6.5" fill="#fff" stroke="#111" stroke-width="1.1"/><path d="M6.5,6.5 V3.5 Q6.5,0.8 9,0.8 Q11.5,0.8 11.5,3.5 V5" fill="none" stroke="#111" stroke-width="1.1"/></svg>
<div class="a" style="left:1155px;top:300px;width:12px;height:12px;background:#007a10;border:1px solid #111"></div>
<div class="t" style="left:1253px;top:301px;font-size:11px;color:#111">Contin</div>
<div class="t" style="left:981px;top:318px;font-size:11px;color:#111">Capa 05</div>
<svg class="a" style="left:1121px;top:316px" width="11" height="15"><path d="M3,10 Q0.5,7.5 0.8,5 Q1.2,0.8 5,0.8 Q8.8,0.8 9.2,5 Q9.5,7.5 7,10 V12.5 H3 Z" fill="#f4f08a" stroke="#333" stroke-width="0.9"/><path d="M3.5,13.5 H6.5" stroke="#333"/></svg>
<svg class="a" style="left:1138px;top:316px" width="13" height="14"><rect x="0.5" y="6.5" width="7.5" height="6.5" fill="#fff" stroke="#111" stroke-width="1.1"/><path d="M6.5,6.5 V3.5 Q6.5,0.8 9,0.8 Q11.5,0.8 11.5,3.5 V5" fill="none" stroke="#111" stroke-width="1.1"/></svg>
<div class="a" style="left:1155px;top:317px;width:12px;height:12px;background:#ffffff;border:1px solid #111"></div>
<div class="t" style="left:1253px;top:318px;font-size:11px;color:#111">Contin</div>
<div class="a" style="left:1172px;top:249px;width:13px;height:13px;border-radius:50%;background:#fff"></div>
<div class="a" style="left:973px;top:652px;width:305px;height:15px;background:#eceeef"></div>
<svg class="a" style="left:976px;top:652px" width="300" height="16"><path d="M8.5,4 L4.5,7.5 L8.5,11 Z" fill="#333"/><path d="M291.5,4 L295.5,7.5 L291.5,11 Z" fill="#333"/></svg>
<div class="a" style="left:991px;top:652px;width:181px;height:15px;border:1px solid #8c9299;border-radius:2px;background:linear-gradient(#f4f4f4,#d9dadc)"></div>
<svg class="a" style="left:1076px;top:655px" width="10" height="9"><path d="M2.5,1 V8 M5,1 V8 M7.5,1 V8" stroke="#444"/></svg>
<div class="a" style="left:1002px;top:668px;width:255px;height:1px;background:#a8acb2"></div>
<div class="t" style="left:996px;top:168px;font-size:11.3px;color:#111">Propied...</div>
<div class="t" style="left:1066px;top:168px;font-size:11.3px;color:#111">Capas</div>
<div class="t" style="left:1137px;top:168px;font-size:11.3px;color:#111">Visualiz...</div>
<div class="t" style="left:1208px;top:168px;font-size:11.3px;color:#111">Ayuda</div>
<div class="a" style="left:514px;top:155px;width:3px;height:495px;background:#eef0f3"></div>
<div class="a" style="left:64px;top:401px;width:901px;height:3px;background:#eef0f3"></div>
<svg class="a" style="left:60px;top:649px" width="300" height="24" viewBox="60 649 300 24">
<defs><linearGradient id="vtg" x1="0" y1="0" x2="0" y2="1"><stop offset="0" stop-color="#dde3eb"/><stop offset="1" stop-color="#cdd5e0"/></linearGradient></defs>
<path d="M319,650 L320,662 L326,670.5 H348 Q350,670.5 350,668.5 V650" fill="url(#vtg)" stroke="#a8b2bf" stroke-width="1"/>
<path d="M258,650 L259,662 L265,670.5 H317 Q319,670.5 319,668.5 V650" fill="url(#vtg)" stroke="#a8b2bf" stroke-width="1"/>
<path d="M203,650 L204,662 L210,670.5 H256 Q258,670.5 258,668.5 V650" fill="url(#vtg)" stroke="#a8b2bf" stroke-width="1"/>
<path d="M64,650 L65,662 L71,670.5 H139 Q141,670.5 141,668.5 V650" fill="url(#vtg)" stroke="#a8b2bf" stroke-width="1"/>
<path d="M135,650 L142,662 L148,670.5 H201 Q203,670.5 203,668.5 V650" fill="#fbfcfd" stroke="#a8b2bf" stroke-width="1"/>
<path d="M333.5,659.5 H336.5 V656.5 H339.5 V659.5 H342.5 V662.5 H339.5 V665.5 H336.5 V662.5 H333.5 Z" fill="#f6f7f9" stroke="#555" stroke-width="0.9"/>
</svg>
<div class="t" style="left:75.5px;top:655px;font-size:12px;color:#1a1a1a">Perspectiva</div>
<div class="t" style="left:152px;top:655px;font-size:12px;color:#1a1a1a">Superior</div>
<div class="t" style="left:214px;top:655px;font-size:12px;color:#1a1a1a">Frontal</div>
<div class="t" style="left:270px;top:655px;font-size:12px;color:#1a1a1a">Derecha</div>
<div class="a" style="left:0;top:672px;width:1280px;height:28px;background:#e0e4e9"></div>
<div class="a" style="left:3px;top:677px;width:1px;height:21px;background:#b4bac2"></div>
<div class="a" style="left:5px;top:677px;width:1px;height:21px;background:#b4bac2"></div>
<div class="a" style="left:11px;top:681px;width:12px;height:12px;border:1px solid #8c949e;background:linear-gradient(135deg,#dfe3e8,#fbfbfc)"></div>
<svg class="a" style="left:11px;top:681px" width="12" height="12"><path d="M2.5,6 L5,9 L9.5,2.5" fill="none" stroke="#3a4a8a" stroke-width="1.5"/></svg>
<div class="t" style="left:29px;top:683px;font-size:10.5px;color:#111">Fin</div>
<div class="a" style="left:51px;top:681px;width:12px;height:12px;border:1px solid #8c949e;background:linear-gradient(135deg,#dfe3e8,#fbfbfc)"></div>
<div class="t" style="left:67px;top:683px;font-size:10.5px;color:#111">Cerca</div>
<div class="a" style="left:103px;top:681px;width:12px;height:12px;border:1px solid #8c949e;background:linear-gradient(135deg,#dfe3e8,#fbfbfc)"></div>
<div class="t" style="left:121px;top:683px;font-size:10.5px;color:#111">Punto</div>
<div class="a" style="left:156px;top:681px;width:12px;height:12px;border:1px solid #8c949e;background:linear-gradient(135deg,#dfe3e8,#fbfbfc)"></div>
<div class="t" style="left:174px;top:683px;font-size:10.5px;color:#111">Med</div>
<div class="a" style="left:202px;top:681px;width:12px;height:12px;border:1px solid #8c949e;background:linear-gradient(135deg,#dfe3e8,#fbfbfc)"></div>
<div class="t" style="left:220px;top:683px;font-size:10.5px;color:#111">Cen</div>
<div class="a" style="left:246px;top:681px;width:12px;height:12px;border:1px solid #8c949e;background:linear-gradient(135deg,#dfe3e8,#fbfbfc)"></div>
<div class="t" style="left:264px;top:683px;font-size:10.5px;color:#111">Int</div>
<div class="a" style="left:283px;top:681px;width:12px;height:12px;border:1px solid #8c949e;background:linear-gradient(135deg,#dfe3e8,#fbfbfc)"></div>
<div class="t" style="left:301px;top:683px;font-size:10.5px;color:#111">Perp</div>
<div class="a" style="left:331px;top:681px;width:12px;height:12px;border:1px solid #8c949e;background:linear-gradient(135deg,#dfe3e8,#fbfbfc)"></div>
<div class="t" style="left:349px;top:683px;font-size:10.5px;color:#111">Tan</div>
<div class="a" style="left:375px;top:681px;width:12px;height:12px;border:1px solid #8c949e;background:linear-gradient(135deg,#dfe3e8,#fbfbfc)"></div>
<div class="t" style="left:391px;top:683px;font-size:10.5px;color:#111">Cuad</div>
<div class="a" style="left:424px;top:681px;width:12px;height:12px;border:1px solid #8c949e;background:linear-gradient(135deg,#dfe3e8,#fbfbfc)"></div>
<div class="t" style="left:442px;top:683px;font-size:10.5px;color:#111">Nodo</div>
<div class="a" style="left:476px;top:681px;width:12px;height:12px;border:1px solid #8c949e;background:linear-gradient(135deg,#dfe3e8,#fbfbfc)"></div>
<div class="t" style="left:493px;top:683px;font-size:10.5px;color:#111">Vértice</div>
<div class="a" style="left:533px;top:679px;width:14px;height:15px;border:1px solid #7c848e;border-radius:3px;background:linear-gradient(#f4f5f7,#d4d8de)"></div>
<div class="t" style="left:552px;top:683px;font-size:10.5px;color:#111">Proyectar</div>
<div class="a" style="left:602px;top:679px;width:14px;height:15px;border:1px solid #7c848e;border-radius:3px;background:linear-gradient(#f4f5f7,#d4d8de)"></div>
<div class="t" style="left:621px;top:683px;font-size:10.5px;color:#111">Desactivar</div>
<div class="a" style="left:0;top:700px;width:1280px;height:20px;background:linear-gradient(#e9ecf0,#dde1e7);border-top:1px solid #a9aeb5"></div>
<div class="a" style="left:581px;top:701px;width:135px;height:17px;background:linear-gradient(#eaf2fb,#d8e6f6)"></div>
<div class="a" style="left:56px;top:701px;width:1px;height:17px;background:#a9aeb5"></div>
<div class="a" style="left:144px;top:701px;width:1px;height:17px;background:#a9aeb5"></div>
<div class="a" style="left:232px;top:701px;width:1px;height:17px;background:#a9aeb5"></div>
<div class="a" style="left:320px;top:701px;width:1px;height:17px;background:#a9aeb5"></div>
<div class="a" style="left:408px;top:701px;width:1px;height:17px;background:#a9aeb5"></div>
<div class="a" style="left:581px;top:701px;width:1px;height:17px;background:#a9aeb5"></div>
<div class="a" style="left:716px;top:701px;width:1px;height:17px;background:#a9aeb5"></div>
<div class="a" style="left:754px;top:701px;width:1px;height:17px;background:#a9aeb5"></div>
<div class="a" style="left:809px;top:701px;width:1px;height:17px;background:#a9aeb5"></div>
<div class="a" style="left:864px;top:701px;width:1px;height:17px;background:#a9aeb5"></div>
<div class="a" style="left:950px;top:701px;width:1px;height:17px;background:#a9aeb5"></div>
<div class="a" style="left:1014px;top:701px;width:1px;height:17px;background:#a9aeb5"></div>
<div class="a" style="left:1131px;top:701px;width:1px;height:17px;background:#a9aeb5"></div>
<div class="a" style="left:1177px;top:701px;width:1px;height:17px;background:#a9aeb5"></div>
<div class="a" style="left:1271px;top:701px;width:1px;height:17px;background:#a9aeb5"></div>
<div class="a" style="left:0;top:718px;width:1280px;height:2px;background:#1a1a1a"></div>
<div class="a" style="left:100px;top:719px;width:90px;height:1px;background:#fff"></div><div class="a" style="left:330px;top:719px;width:110px;height:1px;background:#fff"></div><div class="a" style="left:600px;top:719px;width:160px;height:1px;background:#fff"></div>
<div class="t" style="left:7.5px;top:705px;font-size:12px;color:#111">PlanoC</div>
<div class="t" style="left:56.5px;top:705px;width:88.0px;text-align:center;font-size:12px;color:#111">x 55.839</div>
<div class="t" style="left:144.5px;top:705px;width:88.0px;text-align:center;font-size:12px;color:#111">y 4.141</div>
<div class="t" style="left:232.5px;top:705px;width:88.0px;text-align:center;font-size:12px;color:#111">z 0.000</div>
<div class="t" style="left:320.5px;top:705px;width:87.5px;text-align:center;font-size:12px;color:#111">Milímetros</div>
<div class="t" style="left:581px;top:705px;width:135px;text-align:center;font-size:12px;font-weight:bold;color:#111">Forzado a la rejilla</div>
<div class="t" style="left:716px;top:705px;width:38px;text-align:center;font-size:12px;color:#111">Orto</div>
<div class="t" style="left:754px;top:705px;width:55px;text-align:center;font-size:12px;font-weight:bold;color:#111">Planar</div>
<div class="t" style="left:809px;top:705px;width:55px;text-align:center;font-size:12px;font-weight:bold;color:#111">RefObj</div>
<div class="t" style="left:864px;top:705px;width:86px;text-align:center;font-size:12px;color:#111">SmartTrack</div>
<div class="t" style="left:950px;top:705px;width:64.5px;text-align:center;font-size:12px;font-weight:bold;color:#111">Gumball</div>
<div class="t" style="left:1014.5px;top:705px;width:116.5px;text-align:center;font-size:12px;color:#111">Grabar historial</div>
<div class="t" style="left:1131px;top:705px;width:46.5px;text-align:center;font-size:12px;color:#111">Filtrar</div>
<div class="t" style="left:1177.5px;top:705px;width:94.0px;text-align:center;font-size:12px;color:#111">Memoria físic...</div>
<div class="a" style="left:412px;top:705px;width:14px;height:13px;background:#000"></div>
<div class="t" style="left:428px;top:705px;font-size:12px;color:#111">Predeterminada</div>
</body></html>
